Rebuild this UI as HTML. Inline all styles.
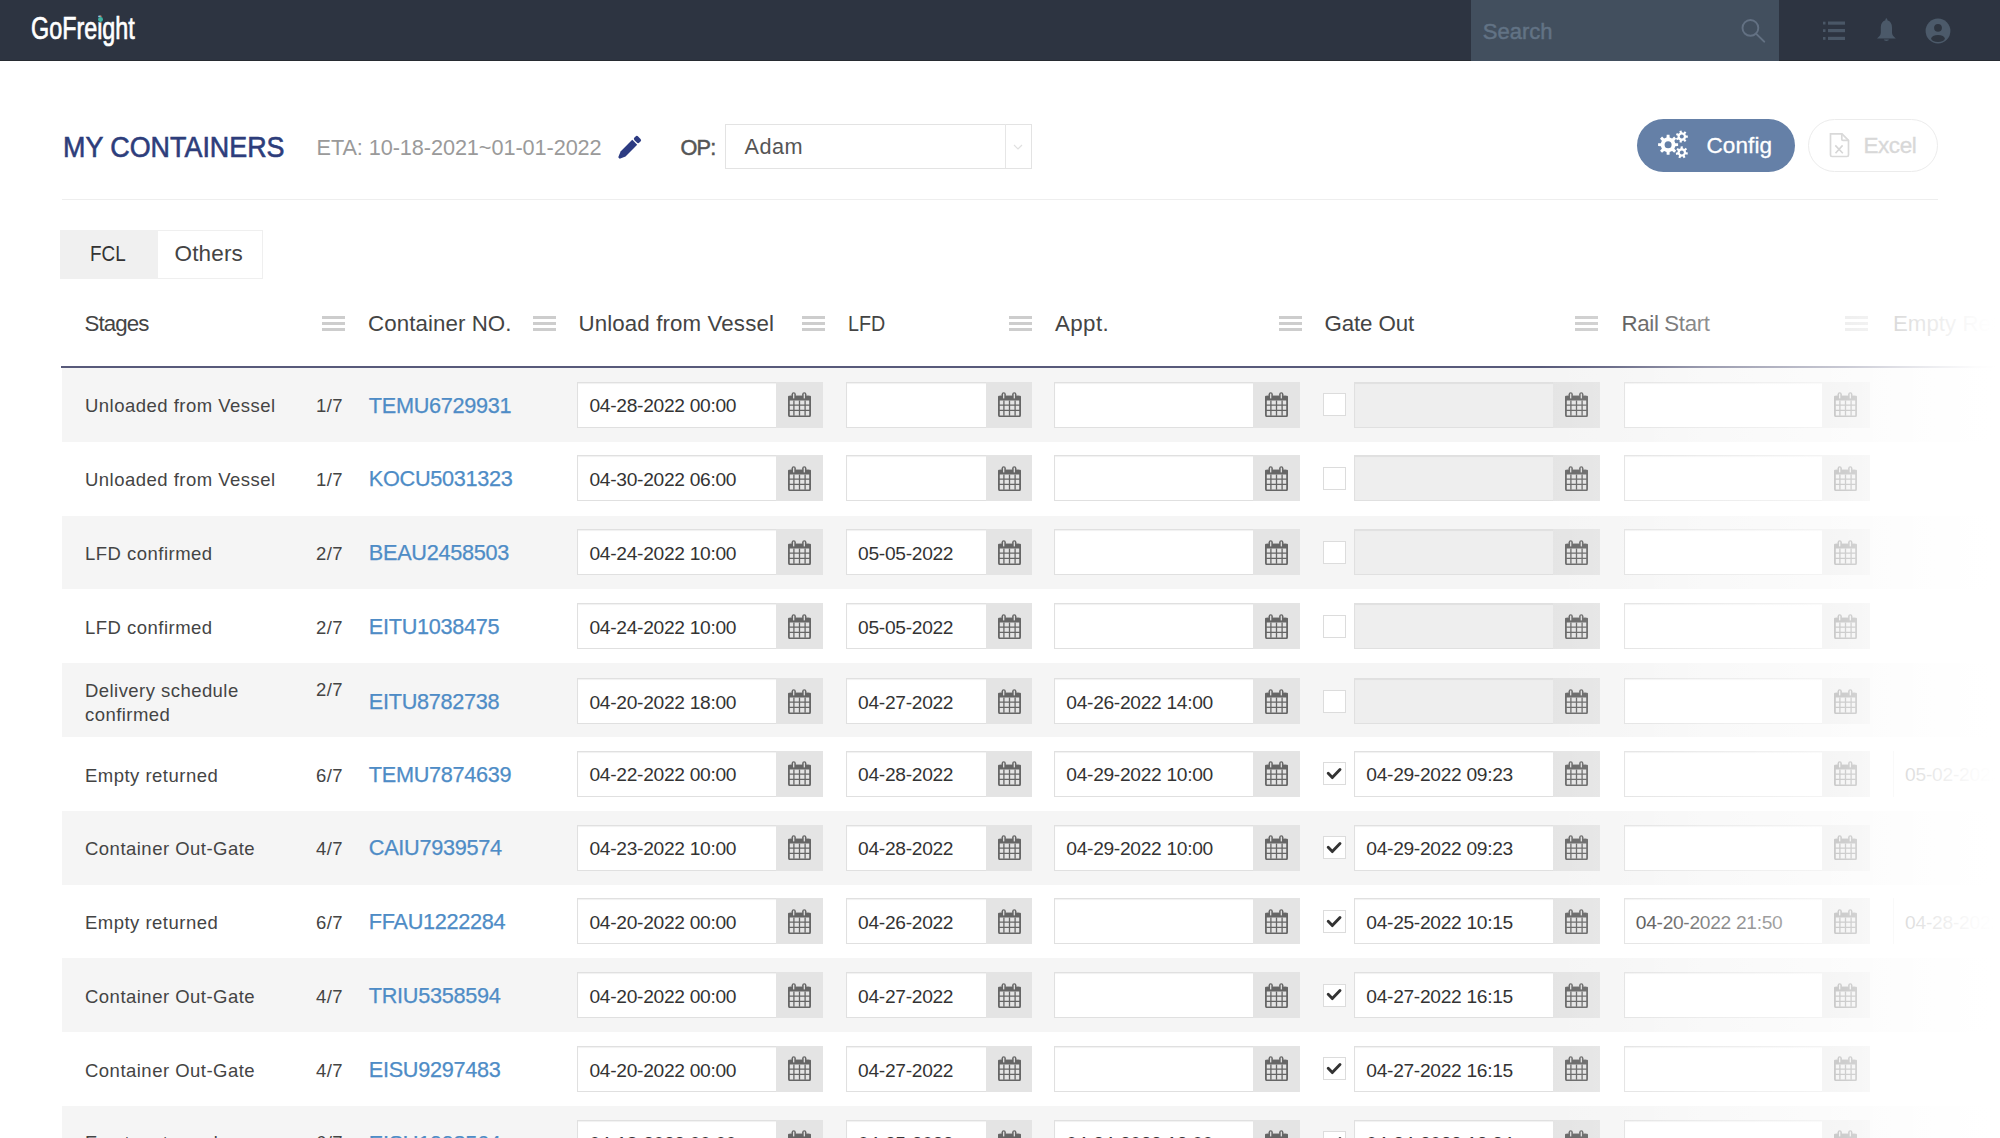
<!DOCTYPE html>
<html><head><meta charset="utf-8"><style>
html,body{margin:0;padding:0;}
body{width:2000px;height:1138px;overflow:hidden;position:relative;background:#fff;font-family:"Liberation Sans", sans-serif;}
.t{position:absolute;white-space:nowrap;}
.b{position:absolute;box-sizing:border-box;}
</style></head><body>
<div class="b" style="left:0.00px;top:0.00px;width:2000.00px;height:61.00px;background:#2d3441;"></div>
<div class="b" style="left:0.00px;top:60.00px;width:2000.00px;height:1.00px;background:#272b31;"></div>
<div class="b" style="left:1470.50px;top:0.00px;width:308.00px;height:61.00px;background:#424f5e;"></div>
<div class="t" style="left:31.20px;top:12.76px;font-size:31px;line-height:31px;color:#fff;font-weight:400;transform:scaleX(0.753);transform-origin:0 0;-webkit-text-stroke:0.7px #fff;">GoFreight</div>
<div class="b" style="left:97.80px;top:16.90px;width:4.80px;height:4.80px;background:#3fb3a3;border-radius:50%;box-shadow:0 0 0 0.6px #2d3441;"></div>
<div class="t" style="left:1482.80px;top:20.58px;font-size:22px;line-height:22px;color:#627385;font-weight:400;-webkit-text-stroke:0.45px #627385;">Search</div>
<svg width="40" height="40" viewBox="0 0 40 40" style="position:absolute;left:1730px;top:8px"><circle cx="20.4" cy="19.9" r="7.9" fill="none" stroke="#637183" stroke-width="1.9"/><path d="M26 25.6L34.2 33.6" stroke="#637183" stroke-width="2" stroke-linecap="round"/></svg>
<svg width="30" height="30" viewBox="0 0 30 30" style="position:absolute;left:1815px;top:15px"><g fill="#4a5767"><rect x="8" y="6.7" width="2.5" height="2.8"/><rect x="8" y="14.2" width="2.5" height="2.8"/><rect x="8" y="22" width="2.5" height="2.8"/><rect x="13" y="6.5" width="17" height="3.2"/><rect x="13" y="14" width="17" height="3.2"/><rect x="13" y="21.8" width="17" height="3.2"/></g></svg>
<svg width="30" height="30" viewBox="0 0 30 30" style="position:absolute;left:1871px;top:15px"><path fill="#4b5969" d="M15.4 3.3C16.2 3.3 16.4 4.5 16.4 5.3C19.6 6.2 21 9 21 12.5L21 17.5C21 20 22.5 21.5 24.8 23.5L6 23.5C8.3 21.5 9.8 20 9.8 17.5L9.8 12.5C9.8 9 11.2 6.2 14.4 5.3C14.4 4.5 14.6 3.3 15.4 3.3Z"/><path fill="#4b5969" d="M13 24.6H17.8C17.8 25.6 16.6 26 15.4 26C14.2 26 13 25.6 13 24.6Z"/></svg>
<svg width="30" height="30" viewBox="0 0 30 30" style="position:absolute;left:1923.3px;top:15.6px"><circle cx="15" cy="15" r="12.4" fill="#4c5a6a"/><circle cx="15" cy="11.8" r="3.9" fill="#2e3540"/><ellipse cx="15" cy="22.5" rx="6.8" ry="3.6" fill="#2e3540"/></svg>
<div class="t" style="left:63.20px;top:132.59px;font-size:28.6px;line-height:28.6px;color:#2d3d7b;font-weight:400;transform:scaleX(0.94);transform-origin:0 0;-webkit-text-stroke:0.6px #2d3d7b;">MY CONTAINERS</div>
<div class="t" style="left:316.50px;top:136.63px;font-size:21.7px;line-height:21.7px;color:#9a9a9a;font-weight:400;letter-spacing:-0.08px;">ETA: 10-18-2021~01-01-2022</div>
<svg width="40" height="40" viewBox="0 0 40 40" style="position:absolute;left:608.8px;top:127.6px"><g transform="rotate(45 20 20)" fill="#2c3b82"><rect x="16.5" y="5.4" width="7" height="5.2" rx="1.8"/><path d="M16.5 11.9H23.5V28.4L21 34.2H19L16.5 28.4Z"/></g></svg>
<div class="t" style="left:680.50px;top:136.63px;font-size:21.7px;line-height:21.7px;color:#555;font-weight:400;letter-spacing:-0.85px;-webkit-text-stroke:0.5px #555;">OP:</div>
<div class="b" style="left:725.00px;top:123.50px;width:307.00px;height:45.00px;border:1px solid #e3e3e3;background:#fff;"></div>
<div class="b" style="left:1005.00px;top:124.00px;width:1.00px;height:44.00px;background:#e6e6e6;"></div>
<div class="t" style="left:744.50px;top:135.63px;font-size:21.7px;line-height:21.7px;color:#555;font-weight:400;letter-spacing:0.47px;">Adam</div>
<svg width="14" height="10" viewBox="0 0 14 10" style="position:absolute;left:1011px;top:142px"><path d="M3 3L7 7L11 3" fill="none" stroke="#e0e0e0" stroke-width="1.2"/></svg>
<div class="b" style="left:1637.00px;top:118.50px;width:158.00px;height:53.00px;background:#6580a7;border-radius:27px;"></div>
<svg width="40" height="40" viewBox="0 0 40 40" style="position:absolute;left:1650px;top:125px"><path d="M16.54 12.47L16.68 9.70L19.52 9.70L19.66 12.47L22.11 13.48L24.16 11.62L26.18 13.64L24.32 15.69L25.33 18.14L28.10 18.28L28.10 21.12L25.33 21.26L24.32 23.71L26.18 25.76L24.16 27.78L22.11 25.92L19.66 26.93L19.52 29.70L16.68 29.70L16.54 26.93L14.09 25.92L12.04 27.78L10.02 25.76L11.88 23.71L10.87 21.26L8.10 21.12L8.10 18.28L10.87 18.14L11.88 15.69L10.02 13.64L12.04 11.62L14.09 13.48Z" fill="#fff"/><circle cx="18.1" cy="19.7" r="3.5" fill="#6580a7"/><path d="M35.96 10.51L37.81 10.54L37.81 12.66L35.96 12.69L35.24 14.17L36.38 15.63L34.71 16.96L33.54 15.53L31.94 15.90L31.50 17.69L29.43 17.22L29.81 15.41L28.52 14.39L26.85 15.16L25.93 13.25L27.58 12.42L27.58 10.78L25.93 9.95L26.85 8.04L28.52 8.81L29.81 7.79L29.43 5.98L31.50 5.51L31.94 7.30L33.54 7.67L34.71 6.24L36.38 7.57L35.24 9.03Z" fill="#fff"/><circle cx="31.8" cy="11.6" r="2.0" fill="#6580a7"/><path d="M36.09 27.16L37.90 27.55L37.48 29.63L35.66 29.29L34.66 30.61L35.48 32.26L33.59 33.23L32.73 31.60L31.08 31.64L30.29 33.31L28.36 32.44L29.10 30.74L28.04 29.48L26.24 29.91L25.72 27.85L27.50 27.37L27.83 25.75L26.37 24.62L27.66 22.92L29.14 24.02L30.61 23.27L30.59 21.42L32.72 21.37L32.79 23.21L34.29 23.89L35.72 22.73L37.09 24.36L35.69 25.56Z" fill="#fff"/><circle cx="31.8" cy="27.4" r="2.0" fill="#6580a7"/></svg>
<div class="t" style="left:1706.50px;top:134.55px;font-size:22.5px;line-height:22.5px;color:#fff;font-weight:400;letter-spacing:0.1px;-webkit-text-stroke:0.3px #fff;">Config</div>
<div class="b" style="left:1808.00px;top:118.50px;width:130.00px;height:53.00px;border:1.5px solid #ececec;border-radius:27px;background:#fff;"></div>
<svg width="24" height="28" viewBox="0 0 24 28" style="position:absolute;left:1827px;top:131px"><path d="M3.5 2.8H15L21.5 9.3V24C21.5 25 21 25.5 20 25.5H5C4 25.5 3.5 25 3.5 24Z" fill="none" stroke="#d9d9d9" stroke-width="1.7"/><path d="M14.8 2.8V8.2C14.8 9 15.2 9.4 16 9.4H21.5" fill="none" stroke="#d9d9d9" stroke-width="1.7"/><path d="M8.3 14.4L15.8 22.3M15.6 14.4L8.5 22.3" stroke="#d6d6d6" stroke-width="1.6"/></svg>
<div class="t" style="left:1863.50px;top:135.25px;font-size:22.5px;line-height:22.5px;color:#d8d8d8;font-weight:400;letter-spacing:-0.45px;-webkit-text-stroke:0.3px #d8d8d8;">Excel</div>
<div class="b" style="left:62.00px;top:198.50px;width:1876.00px;height:1.50px;background:#eeeeee;"></div>
<div class="b" style="left:60.00px;top:229.50px;width:203.00px;height:49.00px;border:1px solid #efefef;background:#fff;"></div>
<div class="b" style="left:60.00px;top:229.50px;width:98.00px;height:49.00px;background:#f0f0f0;"></div>
<div class="t" style="left:89.80px;top:242.55px;font-size:22.5px;line-height:22.5px;color:#333;font-weight:400;transform:scaleX(0.84);transform-origin:0 0;">FCL</div>
<div class="t" style="left:174.50px;top:242.55px;font-size:22.5px;line-height:22.5px;color:#444;font-weight:400;letter-spacing:0.15px;">Others</div>
<div class="t" style="left:84.50px;top:313.12px;font-size:22.3px;line-height:22.3px;color:#444;font-weight:400;letter-spacing:-0.91px;">Stages</div>
<div class="b" style="left:321.50px;top:315.50px;width:23.20px;height:3.00px;background:#cdcdcd;"></div><div class="b" style="left:321.50px;top:321.50px;width:23.20px;height:3.00px;background:#cdcdcd;"></div><div class="b" style="left:321.50px;top:327.50px;width:23.20px;height:3.00px;background:#cdcdcd;"></div>
<div class="t" style="left:368.00px;top:313.12px;font-size:22.3px;line-height:22.3px;color:#444;font-weight:400;letter-spacing:0.08px;">Container NO.</div>
<div class="b" style="left:532.50px;top:315.50px;width:23.20px;height:3.00px;background:#cdcdcd;"></div><div class="b" style="left:532.50px;top:321.50px;width:23.20px;height:3.00px;background:#cdcdcd;"></div><div class="b" style="left:532.50px;top:327.50px;width:23.20px;height:3.00px;background:#cdcdcd;"></div>
<div class="t" style="left:578.50px;top:313.12px;font-size:22.3px;line-height:22.3px;color:#444;font-weight:400;letter-spacing:0.12px;">Unload from Vessel</div>
<div class="b" style="left:801.50px;top:315.50px;width:23.20px;height:3.00px;background:#cdcdcd;"></div><div class="b" style="left:801.50px;top:321.50px;width:23.20px;height:3.00px;background:#cdcdcd;"></div><div class="b" style="left:801.50px;top:327.50px;width:23.20px;height:3.00px;background:#cdcdcd;"></div>
<div class="t" style="left:847.50px;top:313.12px;font-size:22.3px;line-height:22.3px;color:#444;font-weight:400;transform:scaleX(0.884);transform-origin:0 0;">LFD</div>
<div class="b" style="left:1009.30px;top:315.50px;width:23.20px;height:3.00px;background:#cdcdcd;"></div><div class="b" style="left:1009.30px;top:321.50px;width:23.20px;height:3.00px;background:#cdcdcd;"></div><div class="b" style="left:1009.30px;top:327.50px;width:23.20px;height:3.00px;background:#cdcdcd;"></div>
<div class="t" style="left:1055.00px;top:313.12px;font-size:22.3px;line-height:22.3px;color:#444;font-weight:400;letter-spacing:0.41px;">Appt.</div>
<div class="b" style="left:1278.50px;top:315.50px;width:23.20px;height:3.00px;background:#cdcdcd;"></div><div class="b" style="left:1278.50px;top:321.50px;width:23.20px;height:3.00px;background:#cdcdcd;"></div><div class="b" style="left:1278.50px;top:327.50px;width:23.20px;height:3.00px;background:#cdcdcd;"></div>
<div class="t" style="left:1324.50px;top:313.12px;font-size:22.3px;line-height:22.3px;color:#444;font-weight:400;letter-spacing:-0.11px;">Gate Out</div>
<div class="b" style="left:1575.30px;top:315.50px;width:23.20px;height:3.00px;background:#cdcdcd;"></div><div class="b" style="left:1575.30px;top:321.50px;width:23.20px;height:3.00px;background:#cdcdcd;"></div><div class="b" style="left:1575.30px;top:327.50px;width:23.20px;height:3.00px;background:#cdcdcd;"></div>
<div class="t" style="left:1621.50px;top:313.12px;font-size:22.3px;line-height:22.3px;color:#444;font-weight:400;letter-spacing:-0.36px;">Rail Start</div>
<div class="b" style="left:1845.30px;top:315.50px;width:23.20px;height:3.00px;background:#cdcdcd;"></div><div class="b" style="left:1845.30px;top:321.50px;width:23.20px;height:3.00px;background:#cdcdcd;"></div><div class="b" style="left:1845.30px;top:327.50px;width:23.20px;height:3.00px;background:#cdcdcd;"></div>
<div class="t" style="left:1893.00px;top:313.12px;font-size:22.3px;line-height:22.3px;color:#444;font-weight:400;">Empty Return</div>
<div class="b" style="left:61.00px;top:366.00px;width:1939.00px;height:2.00px;background:#585a7a;"></div>
<div class="b" style="left:61.50px;top:368.00px;width:1938.50px;height:73.80px;background:#f5f5f5;"></div>
<div class="t" style="left:85.00px;top:397.44px;font-size:18.5px;line-height:18.5px;color:#444;font-weight:400;letter-spacing:0.48px;">Unloaded from Vessel</div>
<div class="t" style="left:316.00px;top:397.44px;font-size:18.5px;line-height:18.5px;color:#444;font-weight:400;letter-spacing:0.39px;">1/7</div>
<div class="t" style="left:368.80px;top:394.53px;font-size:21.7px;line-height:21.7px;color:#4e8cc6;font-weight:400;letter-spacing:-0.3px;-webkit-text-stroke:0.25px #4e8cc6;">TEMU6729931</div>
<div class="b" style="left:577.20px;top:381.60px;width:245.80px;height:46.00px;border:1px solid #e0e0e0;box-shadow:inset 0 1px 1px rgba(0,0,0,.06);background:#fff;"></div><div class="b" style="left:775.80px;top:381.60px;width:47.20px;height:46.00px;background:#e4e4e4;"></div><svg width="23" height="25" viewBox="0 0 23 25" style="position:absolute;left:788.00px;top:392.10px"><g fill="none" stroke="#666"><rect x="0.9" y="4.6" width="21.2" height="19.9" rx="1.5" stroke-width="1.8"/><path d="M1 13.2H22M1 18.4H22M5.9 8.4V23.8M11.5 8.4V23.8M17.1 8.4V23.8" stroke-width="1.3"/></g><rect x="0" y="3.8" width="23" height="4.6" rx="1" fill="#666"/><rect x="3.6" y="0.2" width="4.2" height="7.4" rx="2.1" fill="#666"/><rect x="14.2" y="0.2" width="4.2" height="7.4" rx="2.1" fill="#666"/><rect x="5.1" y="1.6" width="1.2" height="4.8" fill="#fff" opacity=".85"/><rect x="15.7" y="1.6" width="1.2" height="4.8" fill="#fff" opacity=".85"/></svg><div class="t" style="left:589.50px;top:396.15px;font-size:19.2px;line-height:19.2px;color:#333;font-weight:400;letter-spacing:-0.3px;">04-28-2022 00:00</div>
<div class="b" style="left:845.80px;top:381.60px;width:186.00px;height:46.00px;border:1px solid #e0e0e0;box-shadow:inset 0 1px 1px rgba(0,0,0,.06);background:#fff;"></div><div class="b" style="left:985.80px;top:381.60px;width:46.00px;height:46.00px;background:#e4e4e4;"></div><svg width="23" height="25" viewBox="0 0 23 25" style="position:absolute;left:998.00px;top:392.10px"><g fill="none" stroke="#666"><rect x="0.9" y="4.6" width="21.2" height="19.9" rx="1.5" stroke-width="1.8"/><path d="M1 13.2H22M1 18.4H22M5.9 8.4V23.8M11.5 8.4V23.8M17.1 8.4V23.8" stroke-width="1.3"/></g><rect x="0" y="3.8" width="23" height="4.6" rx="1" fill="#666"/><rect x="3.6" y="0.2" width="4.2" height="7.4" rx="2.1" fill="#666"/><rect x="14.2" y="0.2" width="4.2" height="7.4" rx="2.1" fill="#666"/><rect x="5.1" y="1.6" width="1.2" height="4.8" fill="#fff" opacity=".85"/><rect x="15.7" y="1.6" width="1.2" height="4.8" fill="#fff" opacity=".85"/></svg>
<div class="b" style="left:1054.00px;top:381.60px;width:246.00px;height:46.00px;border:1px solid #e0e0e0;box-shadow:inset 0 1px 1px rgba(0,0,0,.06);background:#fff;"></div><div class="b" style="left:1252.50px;top:381.60px;width:47.50px;height:46.00px;background:#e4e4e4;"></div><svg width="23" height="25" viewBox="0 0 23 25" style="position:absolute;left:1264.70px;top:392.10px"><g fill="none" stroke="#666"><rect x="0.9" y="4.6" width="21.2" height="19.9" rx="1.5" stroke-width="1.8"/><path d="M1 13.2H22M1 18.4H22M5.9 8.4V23.8M11.5 8.4V23.8M17.1 8.4V23.8" stroke-width="1.3"/></g><rect x="0" y="3.8" width="23" height="4.6" rx="1" fill="#666"/><rect x="3.6" y="0.2" width="4.2" height="7.4" rx="2.1" fill="#666"/><rect x="14.2" y="0.2" width="4.2" height="7.4" rx="2.1" fill="#666"/><rect x="5.1" y="1.6" width="1.2" height="4.8" fill="#fff" opacity=".85"/><rect x="15.7" y="1.6" width="1.2" height="4.8" fill="#fff" opacity=".85"/></svg>
<div class="b" style="left:1323.20px;top:393.10px;width:22.60px;height:23.00px;border:1.5px solid #dcdcdc;background:#fff;"></div>
<div class="b" style="left:1354.00px;top:381.60px;width:246.00px;height:46.00px;border:1px solid #e0e0e0;box-shadow:inset 0 1px 1px rgba(0,0,0,.06);background:#eeeeee;"></div><div class="b" style="left:1552.50px;top:381.60px;width:47.50px;height:46.00px;background:#e4e4e4;"></div><svg width="23" height="25" viewBox="0 0 23 25" style="position:absolute;left:1564.70px;top:392.10px"><g fill="none" stroke="#666"><rect x="0.9" y="4.6" width="21.2" height="19.9" rx="1.5" stroke-width="1.8"/><path d="M1 13.2H22M1 18.4H22M5.9 8.4V23.8M11.5 8.4V23.8M17.1 8.4V23.8" stroke-width="1.3"/></g><rect x="0" y="3.8" width="23" height="4.6" rx="1" fill="#666"/><rect x="3.6" y="0.2" width="4.2" height="7.4" rx="2.1" fill="#666"/><rect x="14.2" y="0.2" width="4.2" height="7.4" rx="2.1" fill="#666"/><rect x="5.1" y="1.6" width="1.2" height="4.8" fill="#fff" opacity=".85"/><rect x="15.7" y="1.6" width="1.2" height="4.8" fill="#fff" opacity=".85"/></svg>
<div class="b" style="left:1623.50px;top:381.60px;width:246.50px;height:46.00px;border:1px solid #e0e0e0;box-shadow:inset 0 1px 1px rgba(0,0,0,.06);background:#fff;"></div><div class="b" style="left:1821.50px;top:381.60px;width:48.50px;height:46.00px;background:#e4e4e4;"></div><svg width="23" height="25" viewBox="0 0 23 25" style="position:absolute;left:1833.70px;top:392.10px"><g fill="none" stroke="#666"><rect x="0.9" y="4.6" width="21.2" height="19.9" rx="1.5" stroke-width="1.8"/><path d="M1 13.2H22M1 18.4H22M5.9 8.4V23.8M11.5 8.4V23.8M17.1 8.4V23.8" stroke-width="1.3"/></g><rect x="0" y="3.8" width="23" height="4.6" rx="1" fill="#666"/><rect x="3.6" y="0.2" width="4.2" height="7.4" rx="2.1" fill="#666"/><rect x="14.2" y="0.2" width="4.2" height="7.4" rx="2.1" fill="#666"/><rect x="5.1" y="1.6" width="1.2" height="4.8" fill="#fff" opacity=".85"/><rect x="15.7" y="1.6" width="1.2" height="4.8" fill="#fff" opacity=".85"/></svg>

<div class="t" style="left:85.00px;top:471.26px;font-size:18.5px;line-height:18.5px;color:#444;font-weight:400;letter-spacing:0.48px;">Unloaded from Vessel</div>
<div class="t" style="left:316.00px;top:471.26px;font-size:18.5px;line-height:18.5px;color:#444;font-weight:400;letter-spacing:0.39px;">1/7</div>
<div class="t" style="left:368.80px;top:468.35px;font-size:21.7px;line-height:21.7px;color:#4e8cc6;font-weight:400;letter-spacing:-0.3px;-webkit-text-stroke:0.25px #4e8cc6;">KOCU5031323</div>
<div class="b" style="left:577.20px;top:455.42px;width:245.80px;height:46.00px;border:1px solid #e0e0e0;box-shadow:inset 0 1px 1px rgba(0,0,0,.06);background:#fff;"></div><div class="b" style="left:775.80px;top:455.42px;width:47.20px;height:46.00px;background:#e4e4e4;"></div><svg width="23" height="25" viewBox="0 0 23 25" style="position:absolute;left:788.00px;top:465.92px"><g fill="none" stroke="#666"><rect x="0.9" y="4.6" width="21.2" height="19.9" rx="1.5" stroke-width="1.8"/><path d="M1 13.2H22M1 18.4H22M5.9 8.4V23.8M11.5 8.4V23.8M17.1 8.4V23.8" stroke-width="1.3"/></g><rect x="0" y="3.8" width="23" height="4.6" rx="1" fill="#666"/><rect x="3.6" y="0.2" width="4.2" height="7.4" rx="2.1" fill="#666"/><rect x="14.2" y="0.2" width="4.2" height="7.4" rx="2.1" fill="#666"/><rect x="5.1" y="1.6" width="1.2" height="4.8" fill="#fff" opacity=".85"/><rect x="15.7" y="1.6" width="1.2" height="4.8" fill="#fff" opacity=".85"/></svg><div class="t" style="left:589.50px;top:469.97px;font-size:19.2px;line-height:19.2px;color:#333;font-weight:400;letter-spacing:-0.3px;">04-30-2022 06:00</div>
<div class="b" style="left:845.80px;top:455.42px;width:186.00px;height:46.00px;border:1px solid #e0e0e0;box-shadow:inset 0 1px 1px rgba(0,0,0,.06);background:#fff;"></div><div class="b" style="left:985.80px;top:455.42px;width:46.00px;height:46.00px;background:#e4e4e4;"></div><svg width="23" height="25" viewBox="0 0 23 25" style="position:absolute;left:998.00px;top:465.92px"><g fill="none" stroke="#666"><rect x="0.9" y="4.6" width="21.2" height="19.9" rx="1.5" stroke-width="1.8"/><path d="M1 13.2H22M1 18.4H22M5.9 8.4V23.8M11.5 8.4V23.8M17.1 8.4V23.8" stroke-width="1.3"/></g><rect x="0" y="3.8" width="23" height="4.6" rx="1" fill="#666"/><rect x="3.6" y="0.2" width="4.2" height="7.4" rx="2.1" fill="#666"/><rect x="14.2" y="0.2" width="4.2" height="7.4" rx="2.1" fill="#666"/><rect x="5.1" y="1.6" width="1.2" height="4.8" fill="#fff" opacity=".85"/><rect x="15.7" y="1.6" width="1.2" height="4.8" fill="#fff" opacity=".85"/></svg>
<div class="b" style="left:1054.00px;top:455.42px;width:246.00px;height:46.00px;border:1px solid #e0e0e0;box-shadow:inset 0 1px 1px rgba(0,0,0,.06);background:#fff;"></div><div class="b" style="left:1252.50px;top:455.42px;width:47.50px;height:46.00px;background:#e4e4e4;"></div><svg width="23" height="25" viewBox="0 0 23 25" style="position:absolute;left:1264.70px;top:465.92px"><g fill="none" stroke="#666"><rect x="0.9" y="4.6" width="21.2" height="19.9" rx="1.5" stroke-width="1.8"/><path d="M1 13.2H22M1 18.4H22M5.9 8.4V23.8M11.5 8.4V23.8M17.1 8.4V23.8" stroke-width="1.3"/></g><rect x="0" y="3.8" width="23" height="4.6" rx="1" fill="#666"/><rect x="3.6" y="0.2" width="4.2" height="7.4" rx="2.1" fill="#666"/><rect x="14.2" y="0.2" width="4.2" height="7.4" rx="2.1" fill="#666"/><rect x="5.1" y="1.6" width="1.2" height="4.8" fill="#fff" opacity=".85"/><rect x="15.7" y="1.6" width="1.2" height="4.8" fill="#fff" opacity=".85"/></svg>
<div class="b" style="left:1323.20px;top:466.92px;width:22.60px;height:23.00px;border:1.5px solid #dcdcdc;background:#fff;"></div>
<div class="b" style="left:1354.00px;top:455.42px;width:246.00px;height:46.00px;border:1px solid #e0e0e0;box-shadow:inset 0 1px 1px rgba(0,0,0,.06);background:#eeeeee;"></div><div class="b" style="left:1552.50px;top:455.42px;width:47.50px;height:46.00px;background:#e4e4e4;"></div><svg width="23" height="25" viewBox="0 0 23 25" style="position:absolute;left:1564.70px;top:465.92px"><g fill="none" stroke="#666"><rect x="0.9" y="4.6" width="21.2" height="19.9" rx="1.5" stroke-width="1.8"/><path d="M1 13.2H22M1 18.4H22M5.9 8.4V23.8M11.5 8.4V23.8M17.1 8.4V23.8" stroke-width="1.3"/></g><rect x="0" y="3.8" width="23" height="4.6" rx="1" fill="#666"/><rect x="3.6" y="0.2" width="4.2" height="7.4" rx="2.1" fill="#666"/><rect x="14.2" y="0.2" width="4.2" height="7.4" rx="2.1" fill="#666"/><rect x="5.1" y="1.6" width="1.2" height="4.8" fill="#fff" opacity=".85"/><rect x="15.7" y="1.6" width="1.2" height="4.8" fill="#fff" opacity=".85"/></svg>
<div class="b" style="left:1623.50px;top:455.42px;width:246.50px;height:46.00px;border:1px solid #e0e0e0;box-shadow:inset 0 1px 1px rgba(0,0,0,.06);background:#fff;"></div><div class="b" style="left:1821.50px;top:455.42px;width:48.50px;height:46.00px;background:#e4e4e4;"></div><svg width="23" height="25" viewBox="0 0 23 25" style="position:absolute;left:1833.70px;top:465.92px"><g fill="none" stroke="#666"><rect x="0.9" y="4.6" width="21.2" height="19.9" rx="1.5" stroke-width="1.8"/><path d="M1 13.2H22M1 18.4H22M5.9 8.4V23.8M11.5 8.4V23.8M17.1 8.4V23.8" stroke-width="1.3"/></g><rect x="0" y="3.8" width="23" height="4.6" rx="1" fill="#666"/><rect x="3.6" y="0.2" width="4.2" height="7.4" rx="2.1" fill="#666"/><rect x="14.2" y="0.2" width="4.2" height="7.4" rx="2.1" fill="#666"/><rect x="5.1" y="1.6" width="1.2" height="4.8" fill="#fff" opacity=".85"/><rect x="15.7" y="1.6" width="1.2" height="4.8" fill="#fff" opacity=".85"/></svg>

<div class="b" style="left:61.50px;top:515.60px;width:1938.50px;height:73.80px;background:#f5f5f5;"></div>
<div class="t" style="left:85.00px;top:545.08px;font-size:18.5px;line-height:18.5px;color:#444;font-weight:400;letter-spacing:0.48px;">LFD confirmed</div>
<div class="t" style="left:316.00px;top:545.08px;font-size:18.5px;line-height:18.5px;color:#444;font-weight:400;letter-spacing:0.39px;">2/7</div>
<div class="t" style="left:368.80px;top:542.17px;font-size:21.7px;line-height:21.7px;color:#4e8cc6;font-weight:400;letter-spacing:-0.3px;-webkit-text-stroke:0.25px #4e8cc6;">BEAU2458503</div>
<div class="b" style="left:577.20px;top:529.24px;width:245.80px;height:46.00px;border:1px solid #e0e0e0;box-shadow:inset 0 1px 1px rgba(0,0,0,.06);background:#fff;"></div><div class="b" style="left:775.80px;top:529.24px;width:47.20px;height:46.00px;background:#e4e4e4;"></div><svg width="23" height="25" viewBox="0 0 23 25" style="position:absolute;left:788.00px;top:539.74px"><g fill="none" stroke="#666"><rect x="0.9" y="4.6" width="21.2" height="19.9" rx="1.5" stroke-width="1.8"/><path d="M1 13.2H22M1 18.4H22M5.9 8.4V23.8M11.5 8.4V23.8M17.1 8.4V23.8" stroke-width="1.3"/></g><rect x="0" y="3.8" width="23" height="4.6" rx="1" fill="#666"/><rect x="3.6" y="0.2" width="4.2" height="7.4" rx="2.1" fill="#666"/><rect x="14.2" y="0.2" width="4.2" height="7.4" rx="2.1" fill="#666"/><rect x="5.1" y="1.6" width="1.2" height="4.8" fill="#fff" opacity=".85"/><rect x="15.7" y="1.6" width="1.2" height="4.8" fill="#fff" opacity=".85"/></svg><div class="t" style="left:589.50px;top:543.79px;font-size:19.2px;line-height:19.2px;color:#333;font-weight:400;letter-spacing:-0.3px;">04-24-2022 10:00</div>
<div class="b" style="left:845.80px;top:529.24px;width:186.00px;height:46.00px;border:1px solid #e0e0e0;box-shadow:inset 0 1px 1px rgba(0,0,0,.06);background:#fff;"></div><div class="b" style="left:985.80px;top:529.24px;width:46.00px;height:46.00px;background:#e4e4e4;"></div><svg width="23" height="25" viewBox="0 0 23 25" style="position:absolute;left:998.00px;top:539.74px"><g fill="none" stroke="#666"><rect x="0.9" y="4.6" width="21.2" height="19.9" rx="1.5" stroke-width="1.8"/><path d="M1 13.2H22M1 18.4H22M5.9 8.4V23.8M11.5 8.4V23.8M17.1 8.4V23.8" stroke-width="1.3"/></g><rect x="0" y="3.8" width="23" height="4.6" rx="1" fill="#666"/><rect x="3.6" y="0.2" width="4.2" height="7.4" rx="2.1" fill="#666"/><rect x="14.2" y="0.2" width="4.2" height="7.4" rx="2.1" fill="#666"/><rect x="5.1" y="1.6" width="1.2" height="4.8" fill="#fff" opacity=".85"/><rect x="15.7" y="1.6" width="1.2" height="4.8" fill="#fff" opacity=".85"/></svg><div class="t" style="left:858.10px;top:543.79px;font-size:19.2px;line-height:19.2px;color:#333;font-weight:400;letter-spacing:-0.3px;">05-05-2022</div>
<div class="b" style="left:1054.00px;top:529.24px;width:246.00px;height:46.00px;border:1px solid #e0e0e0;box-shadow:inset 0 1px 1px rgba(0,0,0,.06);background:#fff;"></div><div class="b" style="left:1252.50px;top:529.24px;width:47.50px;height:46.00px;background:#e4e4e4;"></div><svg width="23" height="25" viewBox="0 0 23 25" style="position:absolute;left:1264.70px;top:539.74px"><g fill="none" stroke="#666"><rect x="0.9" y="4.6" width="21.2" height="19.9" rx="1.5" stroke-width="1.8"/><path d="M1 13.2H22M1 18.4H22M5.9 8.4V23.8M11.5 8.4V23.8M17.1 8.4V23.8" stroke-width="1.3"/></g><rect x="0" y="3.8" width="23" height="4.6" rx="1" fill="#666"/><rect x="3.6" y="0.2" width="4.2" height="7.4" rx="2.1" fill="#666"/><rect x="14.2" y="0.2" width="4.2" height="7.4" rx="2.1" fill="#666"/><rect x="5.1" y="1.6" width="1.2" height="4.8" fill="#fff" opacity=".85"/><rect x="15.7" y="1.6" width="1.2" height="4.8" fill="#fff" opacity=".85"/></svg>
<div class="b" style="left:1323.20px;top:540.74px;width:22.60px;height:23.00px;border:1.5px solid #dcdcdc;background:#fff;"></div>
<div class="b" style="left:1354.00px;top:529.24px;width:246.00px;height:46.00px;border:1px solid #e0e0e0;box-shadow:inset 0 1px 1px rgba(0,0,0,.06);background:#eeeeee;"></div><div class="b" style="left:1552.50px;top:529.24px;width:47.50px;height:46.00px;background:#e4e4e4;"></div><svg width="23" height="25" viewBox="0 0 23 25" style="position:absolute;left:1564.70px;top:539.74px"><g fill="none" stroke="#666"><rect x="0.9" y="4.6" width="21.2" height="19.9" rx="1.5" stroke-width="1.8"/><path d="M1 13.2H22M1 18.4H22M5.9 8.4V23.8M11.5 8.4V23.8M17.1 8.4V23.8" stroke-width="1.3"/></g><rect x="0" y="3.8" width="23" height="4.6" rx="1" fill="#666"/><rect x="3.6" y="0.2" width="4.2" height="7.4" rx="2.1" fill="#666"/><rect x="14.2" y="0.2" width="4.2" height="7.4" rx="2.1" fill="#666"/><rect x="5.1" y="1.6" width="1.2" height="4.8" fill="#fff" opacity=".85"/><rect x="15.7" y="1.6" width="1.2" height="4.8" fill="#fff" opacity=".85"/></svg>
<div class="b" style="left:1623.50px;top:529.24px;width:246.50px;height:46.00px;border:1px solid #e0e0e0;box-shadow:inset 0 1px 1px rgba(0,0,0,.06);background:#fff;"></div><div class="b" style="left:1821.50px;top:529.24px;width:48.50px;height:46.00px;background:#e4e4e4;"></div><svg width="23" height="25" viewBox="0 0 23 25" style="position:absolute;left:1833.70px;top:539.74px"><g fill="none" stroke="#666"><rect x="0.9" y="4.6" width="21.2" height="19.9" rx="1.5" stroke-width="1.8"/><path d="M1 13.2H22M1 18.4H22M5.9 8.4V23.8M11.5 8.4V23.8M17.1 8.4V23.8" stroke-width="1.3"/></g><rect x="0" y="3.8" width="23" height="4.6" rx="1" fill="#666"/><rect x="3.6" y="0.2" width="4.2" height="7.4" rx="2.1" fill="#666"/><rect x="14.2" y="0.2" width="4.2" height="7.4" rx="2.1" fill="#666"/><rect x="5.1" y="1.6" width="1.2" height="4.8" fill="#fff" opacity=".85"/><rect x="15.7" y="1.6" width="1.2" height="4.8" fill="#fff" opacity=".85"/></svg>

<div class="t" style="left:85.00px;top:618.90px;font-size:18.5px;line-height:18.5px;color:#444;font-weight:400;letter-spacing:0.48px;">LFD confirmed</div>
<div class="t" style="left:316.00px;top:618.90px;font-size:18.5px;line-height:18.5px;color:#444;font-weight:400;letter-spacing:0.39px;">2/7</div>
<div class="t" style="left:368.80px;top:615.99px;font-size:21.7px;line-height:21.7px;color:#4e8cc6;font-weight:400;letter-spacing:-0.3px;-webkit-text-stroke:0.25px #4e8cc6;">EITU1038475</div>
<div class="b" style="left:577.20px;top:603.06px;width:245.80px;height:46.00px;border:1px solid #e0e0e0;box-shadow:inset 0 1px 1px rgba(0,0,0,.06);background:#fff;"></div><div class="b" style="left:775.80px;top:603.06px;width:47.20px;height:46.00px;background:#e4e4e4;"></div><svg width="23" height="25" viewBox="0 0 23 25" style="position:absolute;left:788.00px;top:613.56px"><g fill="none" stroke="#666"><rect x="0.9" y="4.6" width="21.2" height="19.9" rx="1.5" stroke-width="1.8"/><path d="M1 13.2H22M1 18.4H22M5.9 8.4V23.8M11.5 8.4V23.8M17.1 8.4V23.8" stroke-width="1.3"/></g><rect x="0" y="3.8" width="23" height="4.6" rx="1" fill="#666"/><rect x="3.6" y="0.2" width="4.2" height="7.4" rx="2.1" fill="#666"/><rect x="14.2" y="0.2" width="4.2" height="7.4" rx="2.1" fill="#666"/><rect x="5.1" y="1.6" width="1.2" height="4.8" fill="#fff" opacity=".85"/><rect x="15.7" y="1.6" width="1.2" height="4.8" fill="#fff" opacity=".85"/></svg><div class="t" style="left:589.50px;top:617.61px;font-size:19.2px;line-height:19.2px;color:#333;font-weight:400;letter-spacing:-0.3px;">04-24-2022 10:00</div>
<div class="b" style="left:845.80px;top:603.06px;width:186.00px;height:46.00px;border:1px solid #e0e0e0;box-shadow:inset 0 1px 1px rgba(0,0,0,.06);background:#fff;"></div><div class="b" style="left:985.80px;top:603.06px;width:46.00px;height:46.00px;background:#e4e4e4;"></div><svg width="23" height="25" viewBox="0 0 23 25" style="position:absolute;left:998.00px;top:613.56px"><g fill="none" stroke="#666"><rect x="0.9" y="4.6" width="21.2" height="19.9" rx="1.5" stroke-width="1.8"/><path d="M1 13.2H22M1 18.4H22M5.9 8.4V23.8M11.5 8.4V23.8M17.1 8.4V23.8" stroke-width="1.3"/></g><rect x="0" y="3.8" width="23" height="4.6" rx="1" fill="#666"/><rect x="3.6" y="0.2" width="4.2" height="7.4" rx="2.1" fill="#666"/><rect x="14.2" y="0.2" width="4.2" height="7.4" rx="2.1" fill="#666"/><rect x="5.1" y="1.6" width="1.2" height="4.8" fill="#fff" opacity=".85"/><rect x="15.7" y="1.6" width="1.2" height="4.8" fill="#fff" opacity=".85"/></svg><div class="t" style="left:858.10px;top:617.61px;font-size:19.2px;line-height:19.2px;color:#333;font-weight:400;letter-spacing:-0.3px;">05-05-2022</div>
<div class="b" style="left:1054.00px;top:603.06px;width:246.00px;height:46.00px;border:1px solid #e0e0e0;box-shadow:inset 0 1px 1px rgba(0,0,0,.06);background:#fff;"></div><div class="b" style="left:1252.50px;top:603.06px;width:47.50px;height:46.00px;background:#e4e4e4;"></div><svg width="23" height="25" viewBox="0 0 23 25" style="position:absolute;left:1264.70px;top:613.56px"><g fill="none" stroke="#666"><rect x="0.9" y="4.6" width="21.2" height="19.9" rx="1.5" stroke-width="1.8"/><path d="M1 13.2H22M1 18.4H22M5.9 8.4V23.8M11.5 8.4V23.8M17.1 8.4V23.8" stroke-width="1.3"/></g><rect x="0" y="3.8" width="23" height="4.6" rx="1" fill="#666"/><rect x="3.6" y="0.2" width="4.2" height="7.4" rx="2.1" fill="#666"/><rect x="14.2" y="0.2" width="4.2" height="7.4" rx="2.1" fill="#666"/><rect x="5.1" y="1.6" width="1.2" height="4.8" fill="#fff" opacity=".85"/><rect x="15.7" y="1.6" width="1.2" height="4.8" fill="#fff" opacity=".85"/></svg>
<div class="b" style="left:1323.20px;top:614.56px;width:22.60px;height:23.00px;border:1.5px solid #dcdcdc;background:#fff;"></div>
<div class="b" style="left:1354.00px;top:603.06px;width:246.00px;height:46.00px;border:1px solid #e0e0e0;box-shadow:inset 0 1px 1px rgba(0,0,0,.06);background:#eeeeee;"></div><div class="b" style="left:1552.50px;top:603.06px;width:47.50px;height:46.00px;background:#e4e4e4;"></div><svg width="23" height="25" viewBox="0 0 23 25" style="position:absolute;left:1564.70px;top:613.56px"><g fill="none" stroke="#666"><rect x="0.9" y="4.6" width="21.2" height="19.9" rx="1.5" stroke-width="1.8"/><path d="M1 13.2H22M1 18.4H22M5.9 8.4V23.8M11.5 8.4V23.8M17.1 8.4V23.8" stroke-width="1.3"/></g><rect x="0" y="3.8" width="23" height="4.6" rx="1" fill="#666"/><rect x="3.6" y="0.2" width="4.2" height="7.4" rx="2.1" fill="#666"/><rect x="14.2" y="0.2" width="4.2" height="7.4" rx="2.1" fill="#666"/><rect x="5.1" y="1.6" width="1.2" height="4.8" fill="#fff" opacity=".85"/><rect x="15.7" y="1.6" width="1.2" height="4.8" fill="#fff" opacity=".85"/></svg>
<div class="b" style="left:1623.50px;top:603.06px;width:246.50px;height:46.00px;border:1px solid #e0e0e0;box-shadow:inset 0 1px 1px rgba(0,0,0,.06);background:#fff;"></div><div class="b" style="left:1821.50px;top:603.06px;width:48.50px;height:46.00px;background:#e4e4e4;"></div><svg width="23" height="25" viewBox="0 0 23 25" style="position:absolute;left:1833.70px;top:613.56px"><g fill="none" stroke="#666"><rect x="0.9" y="4.6" width="21.2" height="19.9" rx="1.5" stroke-width="1.8"/><path d="M1 13.2H22M1 18.4H22M5.9 8.4V23.8M11.5 8.4V23.8M17.1 8.4V23.8" stroke-width="1.3"/></g><rect x="0" y="3.8" width="23" height="4.6" rx="1" fill="#666"/><rect x="3.6" y="0.2" width="4.2" height="7.4" rx="2.1" fill="#666"/><rect x="14.2" y="0.2" width="4.2" height="7.4" rx="2.1" fill="#666"/><rect x="5.1" y="1.6" width="1.2" height="4.8" fill="#fff" opacity=".85"/><rect x="15.7" y="1.6" width="1.2" height="4.8" fill="#fff" opacity=".85"/></svg>

<div class="b" style="left:61.50px;top:663.20px;width:1938.50px;height:73.80px;background:#f5f5f5;"></div>
<div class="t" style="left:85px;top:679.08px;font-size:18.5px;line-height:24px;color:#444;letter-spacing:0.45px;">Delivery schedule<br>confirmed</div>
<div class="t" style="left:316.00px;top:681.42px;font-size:18.5px;line-height:18.5px;color:#444;font-weight:400;letter-spacing:0.39px;">2/7</div>
<div class="t" style="left:368.80px;top:691.31px;font-size:21.7px;line-height:21.7px;color:#4e8cc6;font-weight:400;letter-spacing:-0.3px;-webkit-text-stroke:0.25px #4e8cc6;">EITU8782738</div>
<div class="b" style="left:577.20px;top:678.38px;width:245.80px;height:46.00px;border:1px solid #e0e0e0;box-shadow:inset 0 1px 1px rgba(0,0,0,.06);background:#fff;"></div><div class="b" style="left:775.80px;top:678.38px;width:47.20px;height:46.00px;background:#e4e4e4;"></div><svg width="23" height="25" viewBox="0 0 23 25" style="position:absolute;left:788.00px;top:688.88px"><g fill="none" stroke="#666"><rect x="0.9" y="4.6" width="21.2" height="19.9" rx="1.5" stroke-width="1.8"/><path d="M1 13.2H22M1 18.4H22M5.9 8.4V23.8M11.5 8.4V23.8M17.1 8.4V23.8" stroke-width="1.3"/></g><rect x="0" y="3.8" width="23" height="4.6" rx="1" fill="#666"/><rect x="3.6" y="0.2" width="4.2" height="7.4" rx="2.1" fill="#666"/><rect x="14.2" y="0.2" width="4.2" height="7.4" rx="2.1" fill="#666"/><rect x="5.1" y="1.6" width="1.2" height="4.8" fill="#fff" opacity=".85"/><rect x="15.7" y="1.6" width="1.2" height="4.8" fill="#fff" opacity=".85"/></svg><div class="t" style="left:589.50px;top:692.93px;font-size:19.2px;line-height:19.2px;color:#333;font-weight:400;letter-spacing:-0.3px;">04-20-2022 18:00</div>
<div class="b" style="left:845.80px;top:678.38px;width:186.00px;height:46.00px;border:1px solid #e0e0e0;box-shadow:inset 0 1px 1px rgba(0,0,0,.06);background:#fff;"></div><div class="b" style="left:985.80px;top:678.38px;width:46.00px;height:46.00px;background:#e4e4e4;"></div><svg width="23" height="25" viewBox="0 0 23 25" style="position:absolute;left:998.00px;top:688.88px"><g fill="none" stroke="#666"><rect x="0.9" y="4.6" width="21.2" height="19.9" rx="1.5" stroke-width="1.8"/><path d="M1 13.2H22M1 18.4H22M5.9 8.4V23.8M11.5 8.4V23.8M17.1 8.4V23.8" stroke-width="1.3"/></g><rect x="0" y="3.8" width="23" height="4.6" rx="1" fill="#666"/><rect x="3.6" y="0.2" width="4.2" height="7.4" rx="2.1" fill="#666"/><rect x="14.2" y="0.2" width="4.2" height="7.4" rx="2.1" fill="#666"/><rect x="5.1" y="1.6" width="1.2" height="4.8" fill="#fff" opacity=".85"/><rect x="15.7" y="1.6" width="1.2" height="4.8" fill="#fff" opacity=".85"/></svg><div class="t" style="left:858.10px;top:692.93px;font-size:19.2px;line-height:19.2px;color:#333;font-weight:400;letter-spacing:-0.3px;">04-27-2022</div>
<div class="b" style="left:1054.00px;top:678.38px;width:246.00px;height:46.00px;border:1px solid #e0e0e0;box-shadow:inset 0 1px 1px rgba(0,0,0,.06);background:#fff;"></div><div class="b" style="left:1252.50px;top:678.38px;width:47.50px;height:46.00px;background:#e4e4e4;"></div><svg width="23" height="25" viewBox="0 0 23 25" style="position:absolute;left:1264.70px;top:688.88px"><g fill="none" stroke="#666"><rect x="0.9" y="4.6" width="21.2" height="19.9" rx="1.5" stroke-width="1.8"/><path d="M1 13.2H22M1 18.4H22M5.9 8.4V23.8M11.5 8.4V23.8M17.1 8.4V23.8" stroke-width="1.3"/></g><rect x="0" y="3.8" width="23" height="4.6" rx="1" fill="#666"/><rect x="3.6" y="0.2" width="4.2" height="7.4" rx="2.1" fill="#666"/><rect x="14.2" y="0.2" width="4.2" height="7.4" rx="2.1" fill="#666"/><rect x="5.1" y="1.6" width="1.2" height="4.8" fill="#fff" opacity=".85"/><rect x="15.7" y="1.6" width="1.2" height="4.8" fill="#fff" opacity=".85"/></svg><div class="t" style="left:1066.30px;top:692.93px;font-size:19.2px;line-height:19.2px;color:#333;font-weight:400;letter-spacing:-0.3px;">04-26-2022 14:00</div>
<div class="b" style="left:1323.20px;top:689.88px;width:22.60px;height:23.00px;border:1.5px solid #dcdcdc;background:#fff;"></div>
<div class="b" style="left:1354.00px;top:678.38px;width:246.00px;height:46.00px;border:1px solid #e0e0e0;box-shadow:inset 0 1px 1px rgba(0,0,0,.06);background:#eeeeee;"></div><div class="b" style="left:1552.50px;top:678.38px;width:47.50px;height:46.00px;background:#e4e4e4;"></div><svg width="23" height="25" viewBox="0 0 23 25" style="position:absolute;left:1564.70px;top:688.88px"><g fill="none" stroke="#666"><rect x="0.9" y="4.6" width="21.2" height="19.9" rx="1.5" stroke-width="1.8"/><path d="M1 13.2H22M1 18.4H22M5.9 8.4V23.8M11.5 8.4V23.8M17.1 8.4V23.8" stroke-width="1.3"/></g><rect x="0" y="3.8" width="23" height="4.6" rx="1" fill="#666"/><rect x="3.6" y="0.2" width="4.2" height="7.4" rx="2.1" fill="#666"/><rect x="14.2" y="0.2" width="4.2" height="7.4" rx="2.1" fill="#666"/><rect x="5.1" y="1.6" width="1.2" height="4.8" fill="#fff" opacity=".85"/><rect x="15.7" y="1.6" width="1.2" height="4.8" fill="#fff" opacity=".85"/></svg>
<div class="b" style="left:1623.50px;top:678.38px;width:246.50px;height:46.00px;border:1px solid #e0e0e0;box-shadow:inset 0 1px 1px rgba(0,0,0,.06);background:#fff;"></div><div class="b" style="left:1821.50px;top:678.38px;width:48.50px;height:46.00px;background:#e4e4e4;"></div><svg width="23" height="25" viewBox="0 0 23 25" style="position:absolute;left:1833.70px;top:688.88px"><g fill="none" stroke="#666"><rect x="0.9" y="4.6" width="21.2" height="19.9" rx="1.5" stroke-width="1.8"/><path d="M1 13.2H22M1 18.4H22M5.9 8.4V23.8M11.5 8.4V23.8M17.1 8.4V23.8" stroke-width="1.3"/></g><rect x="0" y="3.8" width="23" height="4.6" rx="1" fill="#666"/><rect x="3.6" y="0.2" width="4.2" height="7.4" rx="2.1" fill="#666"/><rect x="14.2" y="0.2" width="4.2" height="7.4" rx="2.1" fill="#666"/><rect x="5.1" y="1.6" width="1.2" height="4.8" fill="#fff" opacity=".85"/><rect x="15.7" y="1.6" width="1.2" height="4.8" fill="#fff" opacity=".85"/></svg>

<div class="t" style="left:85.00px;top:766.54px;font-size:18.5px;line-height:18.5px;color:#444;font-weight:400;letter-spacing:0.48px;">Empty returned</div>
<div class="t" style="left:316.00px;top:766.54px;font-size:18.5px;line-height:18.5px;color:#444;font-weight:400;letter-spacing:0.39px;">6/7</div>
<div class="t" style="left:368.80px;top:763.63px;font-size:21.7px;line-height:21.7px;color:#4e8cc6;font-weight:400;letter-spacing:-0.3px;-webkit-text-stroke:0.25px #4e8cc6;">TEMU7874639</div>
<div class="b" style="left:577.20px;top:750.70px;width:245.80px;height:46.00px;border:1px solid #e0e0e0;box-shadow:inset 0 1px 1px rgba(0,0,0,.06);background:#fff;"></div><div class="b" style="left:775.80px;top:750.70px;width:47.20px;height:46.00px;background:#e4e4e4;"></div><svg width="23" height="25" viewBox="0 0 23 25" style="position:absolute;left:788.00px;top:761.20px"><g fill="none" stroke="#666"><rect x="0.9" y="4.6" width="21.2" height="19.9" rx="1.5" stroke-width="1.8"/><path d="M1 13.2H22M1 18.4H22M5.9 8.4V23.8M11.5 8.4V23.8M17.1 8.4V23.8" stroke-width="1.3"/></g><rect x="0" y="3.8" width="23" height="4.6" rx="1" fill="#666"/><rect x="3.6" y="0.2" width="4.2" height="7.4" rx="2.1" fill="#666"/><rect x="14.2" y="0.2" width="4.2" height="7.4" rx="2.1" fill="#666"/><rect x="5.1" y="1.6" width="1.2" height="4.8" fill="#fff" opacity=".85"/><rect x="15.7" y="1.6" width="1.2" height="4.8" fill="#fff" opacity=".85"/></svg><div class="t" style="left:589.50px;top:765.25px;font-size:19.2px;line-height:19.2px;color:#333;font-weight:400;letter-spacing:-0.3px;">04-22-2022 00:00</div>
<div class="b" style="left:845.80px;top:750.70px;width:186.00px;height:46.00px;border:1px solid #e0e0e0;box-shadow:inset 0 1px 1px rgba(0,0,0,.06);background:#fff;"></div><div class="b" style="left:985.80px;top:750.70px;width:46.00px;height:46.00px;background:#e4e4e4;"></div><svg width="23" height="25" viewBox="0 0 23 25" style="position:absolute;left:998.00px;top:761.20px"><g fill="none" stroke="#666"><rect x="0.9" y="4.6" width="21.2" height="19.9" rx="1.5" stroke-width="1.8"/><path d="M1 13.2H22M1 18.4H22M5.9 8.4V23.8M11.5 8.4V23.8M17.1 8.4V23.8" stroke-width="1.3"/></g><rect x="0" y="3.8" width="23" height="4.6" rx="1" fill="#666"/><rect x="3.6" y="0.2" width="4.2" height="7.4" rx="2.1" fill="#666"/><rect x="14.2" y="0.2" width="4.2" height="7.4" rx="2.1" fill="#666"/><rect x="5.1" y="1.6" width="1.2" height="4.8" fill="#fff" opacity=".85"/><rect x="15.7" y="1.6" width="1.2" height="4.8" fill="#fff" opacity=".85"/></svg><div class="t" style="left:858.10px;top:765.25px;font-size:19.2px;line-height:19.2px;color:#333;font-weight:400;letter-spacing:-0.3px;">04-28-2022</div>
<div class="b" style="left:1054.00px;top:750.70px;width:246.00px;height:46.00px;border:1px solid #e0e0e0;box-shadow:inset 0 1px 1px rgba(0,0,0,.06);background:#fff;"></div><div class="b" style="left:1252.50px;top:750.70px;width:47.50px;height:46.00px;background:#e4e4e4;"></div><svg width="23" height="25" viewBox="0 0 23 25" style="position:absolute;left:1264.70px;top:761.20px"><g fill="none" stroke="#666"><rect x="0.9" y="4.6" width="21.2" height="19.9" rx="1.5" stroke-width="1.8"/><path d="M1 13.2H22M1 18.4H22M5.9 8.4V23.8M11.5 8.4V23.8M17.1 8.4V23.8" stroke-width="1.3"/></g><rect x="0" y="3.8" width="23" height="4.6" rx="1" fill="#666"/><rect x="3.6" y="0.2" width="4.2" height="7.4" rx="2.1" fill="#666"/><rect x="14.2" y="0.2" width="4.2" height="7.4" rx="2.1" fill="#666"/><rect x="5.1" y="1.6" width="1.2" height="4.8" fill="#fff" opacity=".85"/><rect x="15.7" y="1.6" width="1.2" height="4.8" fill="#fff" opacity=".85"/></svg><div class="t" style="left:1066.30px;top:765.25px;font-size:19.2px;line-height:19.2px;color:#333;font-weight:400;letter-spacing:-0.3px;">04-29-2022 10:00</div>
<div class="b" style="left:1323.20px;top:762.20px;width:22.60px;height:23.00px;border:1.5px solid #dcdcdc;background:#fff;"></div>
<svg width="22" height="22" viewBox="0 0 22 22" style="position:absolute;left:1323px;top:761.90px"><path d="M5.2 11.3L9.3 15.6L17 7.6" fill="none" stroke="#333" stroke-width="2.9" stroke-linecap="round" stroke-linejoin="round"/></svg>
<div class="b" style="left:1354.00px;top:750.70px;width:246.00px;height:46.00px;border:1px solid #e0e0e0;box-shadow:inset 0 1px 1px rgba(0,0,0,.06);background:#fff;"></div><div class="b" style="left:1552.50px;top:750.70px;width:47.50px;height:46.00px;background:#e4e4e4;"></div><svg width="23" height="25" viewBox="0 0 23 25" style="position:absolute;left:1564.70px;top:761.20px"><g fill="none" stroke="#666"><rect x="0.9" y="4.6" width="21.2" height="19.9" rx="1.5" stroke-width="1.8"/><path d="M1 13.2H22M1 18.4H22M5.9 8.4V23.8M11.5 8.4V23.8M17.1 8.4V23.8" stroke-width="1.3"/></g><rect x="0" y="3.8" width="23" height="4.6" rx="1" fill="#666"/><rect x="3.6" y="0.2" width="4.2" height="7.4" rx="2.1" fill="#666"/><rect x="14.2" y="0.2" width="4.2" height="7.4" rx="2.1" fill="#666"/><rect x="5.1" y="1.6" width="1.2" height="4.8" fill="#fff" opacity=".85"/><rect x="15.7" y="1.6" width="1.2" height="4.8" fill="#fff" opacity=".85"/></svg><div class="t" style="left:1366.30px;top:765.25px;font-size:19.2px;line-height:19.2px;color:#333;font-weight:400;letter-spacing:-0.3px;">04-29-2022 09:23</div>
<div class="b" style="left:1623.50px;top:750.70px;width:246.50px;height:46.00px;border:1px solid #e0e0e0;box-shadow:inset 0 1px 1px rgba(0,0,0,.06);background:#fff;"></div><div class="b" style="left:1821.50px;top:750.70px;width:48.50px;height:46.00px;background:#e4e4e4;"></div><svg width="23" height="25" viewBox="0 0 23 25" style="position:absolute;left:1833.70px;top:761.20px"><g fill="none" stroke="#666"><rect x="0.9" y="4.6" width="21.2" height="19.9" rx="1.5" stroke-width="1.8"/><path d="M1 13.2H22M1 18.4H22M5.9 8.4V23.8M11.5 8.4V23.8M17.1 8.4V23.8" stroke-width="1.3"/></g><rect x="0" y="3.8" width="23" height="4.6" rx="1" fill="#666"/><rect x="3.6" y="0.2" width="4.2" height="7.4" rx="2.1" fill="#666"/><rect x="14.2" y="0.2" width="4.2" height="7.4" rx="2.1" fill="#666"/><rect x="5.1" y="1.6" width="1.2" height="4.8" fill="#fff" opacity=".85"/><rect x="15.7" y="1.6" width="1.2" height="4.8" fill="#fff" opacity=".85"/></svg>
<div class="b" style="left:1893.00px;top:750.70px;width:250.00px;height:46.00px;border-left:1px solid #e2e2e2;background:#fff;"></div>
<div class="t" style="left:1905.00px;top:765.25px;font-size:19.2px;line-height:19.2px;color:#333;font-weight:400;letter-spacing:-0.23px;">05-02-2022</div>
<div class="b" style="left:61.50px;top:810.80px;width:1938.50px;height:73.80px;background:#f5f5f5;"></div>
<div class="t" style="left:85.00px;top:840.36px;font-size:18.5px;line-height:18.5px;color:#444;font-weight:400;letter-spacing:0.48px;">Container Out-Gate</div>
<div class="t" style="left:316.00px;top:840.36px;font-size:18.5px;line-height:18.5px;color:#444;font-weight:400;letter-spacing:0.39px;">4/7</div>
<div class="t" style="left:368.80px;top:837.45px;font-size:21.7px;line-height:21.7px;color:#4e8cc6;font-weight:400;letter-spacing:-0.3px;-webkit-text-stroke:0.25px #4e8cc6;">CAIU7939574</div>
<div class="b" style="left:577.20px;top:824.52px;width:245.80px;height:46.00px;border:1px solid #e0e0e0;box-shadow:inset 0 1px 1px rgba(0,0,0,.06);background:#fff;"></div><div class="b" style="left:775.80px;top:824.52px;width:47.20px;height:46.00px;background:#e4e4e4;"></div><svg width="23" height="25" viewBox="0 0 23 25" style="position:absolute;left:788.00px;top:835.02px"><g fill="none" stroke="#666"><rect x="0.9" y="4.6" width="21.2" height="19.9" rx="1.5" stroke-width="1.8"/><path d="M1 13.2H22M1 18.4H22M5.9 8.4V23.8M11.5 8.4V23.8M17.1 8.4V23.8" stroke-width="1.3"/></g><rect x="0" y="3.8" width="23" height="4.6" rx="1" fill="#666"/><rect x="3.6" y="0.2" width="4.2" height="7.4" rx="2.1" fill="#666"/><rect x="14.2" y="0.2" width="4.2" height="7.4" rx="2.1" fill="#666"/><rect x="5.1" y="1.6" width="1.2" height="4.8" fill="#fff" opacity=".85"/><rect x="15.7" y="1.6" width="1.2" height="4.8" fill="#fff" opacity=".85"/></svg><div class="t" style="left:589.50px;top:839.07px;font-size:19.2px;line-height:19.2px;color:#333;font-weight:400;letter-spacing:-0.3px;">04-23-2022 10:00</div>
<div class="b" style="left:845.80px;top:824.52px;width:186.00px;height:46.00px;border:1px solid #e0e0e0;box-shadow:inset 0 1px 1px rgba(0,0,0,.06);background:#fff;"></div><div class="b" style="left:985.80px;top:824.52px;width:46.00px;height:46.00px;background:#e4e4e4;"></div><svg width="23" height="25" viewBox="0 0 23 25" style="position:absolute;left:998.00px;top:835.02px"><g fill="none" stroke="#666"><rect x="0.9" y="4.6" width="21.2" height="19.9" rx="1.5" stroke-width="1.8"/><path d="M1 13.2H22M1 18.4H22M5.9 8.4V23.8M11.5 8.4V23.8M17.1 8.4V23.8" stroke-width="1.3"/></g><rect x="0" y="3.8" width="23" height="4.6" rx="1" fill="#666"/><rect x="3.6" y="0.2" width="4.2" height="7.4" rx="2.1" fill="#666"/><rect x="14.2" y="0.2" width="4.2" height="7.4" rx="2.1" fill="#666"/><rect x="5.1" y="1.6" width="1.2" height="4.8" fill="#fff" opacity=".85"/><rect x="15.7" y="1.6" width="1.2" height="4.8" fill="#fff" opacity=".85"/></svg><div class="t" style="left:858.10px;top:839.07px;font-size:19.2px;line-height:19.2px;color:#333;font-weight:400;letter-spacing:-0.3px;">04-28-2022</div>
<div class="b" style="left:1054.00px;top:824.52px;width:246.00px;height:46.00px;border:1px solid #e0e0e0;box-shadow:inset 0 1px 1px rgba(0,0,0,.06);background:#fff;"></div><div class="b" style="left:1252.50px;top:824.52px;width:47.50px;height:46.00px;background:#e4e4e4;"></div><svg width="23" height="25" viewBox="0 0 23 25" style="position:absolute;left:1264.70px;top:835.02px"><g fill="none" stroke="#666"><rect x="0.9" y="4.6" width="21.2" height="19.9" rx="1.5" stroke-width="1.8"/><path d="M1 13.2H22M1 18.4H22M5.9 8.4V23.8M11.5 8.4V23.8M17.1 8.4V23.8" stroke-width="1.3"/></g><rect x="0" y="3.8" width="23" height="4.6" rx="1" fill="#666"/><rect x="3.6" y="0.2" width="4.2" height="7.4" rx="2.1" fill="#666"/><rect x="14.2" y="0.2" width="4.2" height="7.4" rx="2.1" fill="#666"/><rect x="5.1" y="1.6" width="1.2" height="4.8" fill="#fff" opacity=".85"/><rect x="15.7" y="1.6" width="1.2" height="4.8" fill="#fff" opacity=".85"/></svg><div class="t" style="left:1066.30px;top:839.07px;font-size:19.2px;line-height:19.2px;color:#333;font-weight:400;letter-spacing:-0.3px;">04-29-2022 10:00</div>
<div class="b" style="left:1323.20px;top:836.02px;width:22.60px;height:23.00px;border:1.5px solid #dcdcdc;background:#fff;"></div>
<svg width="22" height="22" viewBox="0 0 22 22" style="position:absolute;left:1323px;top:835.72px"><path d="M5.2 11.3L9.3 15.6L17 7.6" fill="none" stroke="#333" stroke-width="2.9" stroke-linecap="round" stroke-linejoin="round"/></svg>
<div class="b" style="left:1354.00px;top:824.52px;width:246.00px;height:46.00px;border:1px solid #e0e0e0;box-shadow:inset 0 1px 1px rgba(0,0,0,.06);background:#fff;"></div><div class="b" style="left:1552.50px;top:824.52px;width:47.50px;height:46.00px;background:#e4e4e4;"></div><svg width="23" height="25" viewBox="0 0 23 25" style="position:absolute;left:1564.70px;top:835.02px"><g fill="none" stroke="#666"><rect x="0.9" y="4.6" width="21.2" height="19.9" rx="1.5" stroke-width="1.8"/><path d="M1 13.2H22M1 18.4H22M5.9 8.4V23.8M11.5 8.4V23.8M17.1 8.4V23.8" stroke-width="1.3"/></g><rect x="0" y="3.8" width="23" height="4.6" rx="1" fill="#666"/><rect x="3.6" y="0.2" width="4.2" height="7.4" rx="2.1" fill="#666"/><rect x="14.2" y="0.2" width="4.2" height="7.4" rx="2.1" fill="#666"/><rect x="5.1" y="1.6" width="1.2" height="4.8" fill="#fff" opacity=".85"/><rect x="15.7" y="1.6" width="1.2" height="4.8" fill="#fff" opacity=".85"/></svg><div class="t" style="left:1366.30px;top:839.07px;font-size:19.2px;line-height:19.2px;color:#333;font-weight:400;letter-spacing:-0.3px;">04-29-2022 09:23</div>
<div class="b" style="left:1623.50px;top:824.52px;width:246.50px;height:46.00px;border:1px solid #e0e0e0;box-shadow:inset 0 1px 1px rgba(0,0,0,.06);background:#fff;"></div><div class="b" style="left:1821.50px;top:824.52px;width:48.50px;height:46.00px;background:#e4e4e4;"></div><svg width="23" height="25" viewBox="0 0 23 25" style="position:absolute;left:1833.70px;top:835.02px"><g fill="none" stroke="#666"><rect x="0.9" y="4.6" width="21.2" height="19.9" rx="1.5" stroke-width="1.8"/><path d="M1 13.2H22M1 18.4H22M5.9 8.4V23.8M11.5 8.4V23.8M17.1 8.4V23.8" stroke-width="1.3"/></g><rect x="0" y="3.8" width="23" height="4.6" rx="1" fill="#666"/><rect x="3.6" y="0.2" width="4.2" height="7.4" rx="2.1" fill="#666"/><rect x="14.2" y="0.2" width="4.2" height="7.4" rx="2.1" fill="#666"/><rect x="5.1" y="1.6" width="1.2" height="4.8" fill="#fff" opacity=".85"/><rect x="15.7" y="1.6" width="1.2" height="4.8" fill="#fff" opacity=".85"/></svg>

<div class="t" style="left:85.00px;top:914.18px;font-size:18.5px;line-height:18.5px;color:#444;font-weight:400;letter-spacing:0.48px;">Empty returned</div>
<div class="t" style="left:316.00px;top:914.18px;font-size:18.5px;line-height:18.5px;color:#444;font-weight:400;letter-spacing:0.39px;">6/7</div>
<div class="t" style="left:368.80px;top:911.27px;font-size:21.7px;line-height:21.7px;color:#4e8cc6;font-weight:400;letter-spacing:-0.3px;-webkit-text-stroke:0.25px #4e8cc6;">FFAU1222284</div>
<div class="b" style="left:577.20px;top:898.34px;width:245.80px;height:46.00px;border:1px solid #e0e0e0;box-shadow:inset 0 1px 1px rgba(0,0,0,.06);background:#fff;"></div><div class="b" style="left:775.80px;top:898.34px;width:47.20px;height:46.00px;background:#e4e4e4;"></div><svg width="23" height="25" viewBox="0 0 23 25" style="position:absolute;left:788.00px;top:908.84px"><g fill="none" stroke="#666"><rect x="0.9" y="4.6" width="21.2" height="19.9" rx="1.5" stroke-width="1.8"/><path d="M1 13.2H22M1 18.4H22M5.9 8.4V23.8M11.5 8.4V23.8M17.1 8.4V23.8" stroke-width="1.3"/></g><rect x="0" y="3.8" width="23" height="4.6" rx="1" fill="#666"/><rect x="3.6" y="0.2" width="4.2" height="7.4" rx="2.1" fill="#666"/><rect x="14.2" y="0.2" width="4.2" height="7.4" rx="2.1" fill="#666"/><rect x="5.1" y="1.6" width="1.2" height="4.8" fill="#fff" opacity=".85"/><rect x="15.7" y="1.6" width="1.2" height="4.8" fill="#fff" opacity=".85"/></svg><div class="t" style="left:589.50px;top:912.89px;font-size:19.2px;line-height:19.2px;color:#333;font-weight:400;letter-spacing:-0.3px;">04-20-2022 00:00</div>
<div class="b" style="left:845.80px;top:898.34px;width:186.00px;height:46.00px;border:1px solid #e0e0e0;box-shadow:inset 0 1px 1px rgba(0,0,0,.06);background:#fff;"></div><div class="b" style="left:985.80px;top:898.34px;width:46.00px;height:46.00px;background:#e4e4e4;"></div><svg width="23" height="25" viewBox="0 0 23 25" style="position:absolute;left:998.00px;top:908.84px"><g fill="none" stroke="#666"><rect x="0.9" y="4.6" width="21.2" height="19.9" rx="1.5" stroke-width="1.8"/><path d="M1 13.2H22M1 18.4H22M5.9 8.4V23.8M11.5 8.4V23.8M17.1 8.4V23.8" stroke-width="1.3"/></g><rect x="0" y="3.8" width="23" height="4.6" rx="1" fill="#666"/><rect x="3.6" y="0.2" width="4.2" height="7.4" rx="2.1" fill="#666"/><rect x="14.2" y="0.2" width="4.2" height="7.4" rx="2.1" fill="#666"/><rect x="5.1" y="1.6" width="1.2" height="4.8" fill="#fff" opacity=".85"/><rect x="15.7" y="1.6" width="1.2" height="4.8" fill="#fff" opacity=".85"/></svg><div class="t" style="left:858.10px;top:912.89px;font-size:19.2px;line-height:19.2px;color:#333;font-weight:400;letter-spacing:-0.3px;">04-26-2022</div>
<div class="b" style="left:1054.00px;top:898.34px;width:246.00px;height:46.00px;border:1px solid #e0e0e0;box-shadow:inset 0 1px 1px rgba(0,0,0,.06);background:#fff;"></div><div class="b" style="left:1252.50px;top:898.34px;width:47.50px;height:46.00px;background:#e4e4e4;"></div><svg width="23" height="25" viewBox="0 0 23 25" style="position:absolute;left:1264.70px;top:908.84px"><g fill="none" stroke="#666"><rect x="0.9" y="4.6" width="21.2" height="19.9" rx="1.5" stroke-width="1.8"/><path d="M1 13.2H22M1 18.4H22M5.9 8.4V23.8M11.5 8.4V23.8M17.1 8.4V23.8" stroke-width="1.3"/></g><rect x="0" y="3.8" width="23" height="4.6" rx="1" fill="#666"/><rect x="3.6" y="0.2" width="4.2" height="7.4" rx="2.1" fill="#666"/><rect x="14.2" y="0.2" width="4.2" height="7.4" rx="2.1" fill="#666"/><rect x="5.1" y="1.6" width="1.2" height="4.8" fill="#fff" opacity=".85"/><rect x="15.7" y="1.6" width="1.2" height="4.8" fill="#fff" opacity=".85"/></svg>
<div class="b" style="left:1323.20px;top:909.84px;width:22.60px;height:23.00px;border:1.5px solid #dcdcdc;background:#fff;"></div>
<svg width="22" height="22" viewBox="0 0 22 22" style="position:absolute;left:1323px;top:909.54px"><path d="M5.2 11.3L9.3 15.6L17 7.6" fill="none" stroke="#333" stroke-width="2.9" stroke-linecap="round" stroke-linejoin="round"/></svg>
<div class="b" style="left:1354.00px;top:898.34px;width:246.00px;height:46.00px;border:1px solid #e0e0e0;box-shadow:inset 0 1px 1px rgba(0,0,0,.06);background:#fff;"></div><div class="b" style="left:1552.50px;top:898.34px;width:47.50px;height:46.00px;background:#e4e4e4;"></div><svg width="23" height="25" viewBox="0 0 23 25" style="position:absolute;left:1564.70px;top:908.84px"><g fill="none" stroke="#666"><rect x="0.9" y="4.6" width="21.2" height="19.9" rx="1.5" stroke-width="1.8"/><path d="M1 13.2H22M1 18.4H22M5.9 8.4V23.8M11.5 8.4V23.8M17.1 8.4V23.8" stroke-width="1.3"/></g><rect x="0" y="3.8" width="23" height="4.6" rx="1" fill="#666"/><rect x="3.6" y="0.2" width="4.2" height="7.4" rx="2.1" fill="#666"/><rect x="14.2" y="0.2" width="4.2" height="7.4" rx="2.1" fill="#666"/><rect x="5.1" y="1.6" width="1.2" height="4.8" fill="#fff" opacity=".85"/><rect x="15.7" y="1.6" width="1.2" height="4.8" fill="#fff" opacity=".85"/></svg><div class="t" style="left:1366.30px;top:912.89px;font-size:19.2px;line-height:19.2px;color:#333;font-weight:400;letter-spacing:-0.3px;">04-25-2022 10:15</div>
<div class="b" style="left:1623.50px;top:898.34px;width:246.50px;height:46.00px;border:1px solid #e0e0e0;box-shadow:inset 0 1px 1px rgba(0,0,0,.06);background:#fff;"></div><div class="b" style="left:1821.50px;top:898.34px;width:48.50px;height:46.00px;background:#e4e4e4;"></div><svg width="23" height="25" viewBox="0 0 23 25" style="position:absolute;left:1833.70px;top:908.84px"><g fill="none" stroke="#666"><rect x="0.9" y="4.6" width="21.2" height="19.9" rx="1.5" stroke-width="1.8"/><path d="M1 13.2H22M1 18.4H22M5.9 8.4V23.8M11.5 8.4V23.8M17.1 8.4V23.8" stroke-width="1.3"/></g><rect x="0" y="3.8" width="23" height="4.6" rx="1" fill="#666"/><rect x="3.6" y="0.2" width="4.2" height="7.4" rx="2.1" fill="#666"/><rect x="14.2" y="0.2" width="4.2" height="7.4" rx="2.1" fill="#666"/><rect x="5.1" y="1.6" width="1.2" height="4.8" fill="#fff" opacity=".85"/><rect x="15.7" y="1.6" width="1.2" height="4.8" fill="#fff" opacity=".85"/></svg><div class="t" style="left:1635.80px;top:912.89px;font-size:19.2px;line-height:19.2px;color:#333;font-weight:400;letter-spacing:-0.3px;">04-20-2022 21:50</div>
<div class="b" style="left:1893.00px;top:898.34px;width:250.00px;height:46.00px;border-left:1px solid #e2e2e2;background:#fff;"></div>
<div class="t" style="left:1905.00px;top:912.89px;font-size:19.2px;line-height:19.2px;color:#333;font-weight:400;letter-spacing:-0.23px;">04-28-2022</div>
<div class="b" style="left:61.50px;top:958.40px;width:1938.50px;height:73.80px;background:#f5f5f5;"></div>
<div class="t" style="left:85.00px;top:988.00px;font-size:18.5px;line-height:18.5px;color:#444;font-weight:400;letter-spacing:0.48px;">Container Out-Gate</div>
<div class="t" style="left:316.00px;top:988.00px;font-size:18.5px;line-height:18.5px;color:#444;font-weight:400;letter-spacing:0.39px;">4/7</div>
<div class="t" style="left:368.80px;top:985.09px;font-size:21.7px;line-height:21.7px;color:#4e8cc6;font-weight:400;letter-spacing:-0.3px;-webkit-text-stroke:0.25px #4e8cc6;">TRIU5358594</div>
<div class="b" style="left:577.20px;top:972.16px;width:245.80px;height:46.00px;border:1px solid #e0e0e0;box-shadow:inset 0 1px 1px rgba(0,0,0,.06);background:#fff;"></div><div class="b" style="left:775.80px;top:972.16px;width:47.20px;height:46.00px;background:#e4e4e4;"></div><svg width="23" height="25" viewBox="0 0 23 25" style="position:absolute;left:788.00px;top:982.66px"><g fill="none" stroke="#666"><rect x="0.9" y="4.6" width="21.2" height="19.9" rx="1.5" stroke-width="1.8"/><path d="M1 13.2H22M1 18.4H22M5.9 8.4V23.8M11.5 8.4V23.8M17.1 8.4V23.8" stroke-width="1.3"/></g><rect x="0" y="3.8" width="23" height="4.6" rx="1" fill="#666"/><rect x="3.6" y="0.2" width="4.2" height="7.4" rx="2.1" fill="#666"/><rect x="14.2" y="0.2" width="4.2" height="7.4" rx="2.1" fill="#666"/><rect x="5.1" y="1.6" width="1.2" height="4.8" fill="#fff" opacity=".85"/><rect x="15.7" y="1.6" width="1.2" height="4.8" fill="#fff" opacity=".85"/></svg><div class="t" style="left:589.50px;top:986.71px;font-size:19.2px;line-height:19.2px;color:#333;font-weight:400;letter-spacing:-0.3px;">04-20-2022 00:00</div>
<div class="b" style="left:845.80px;top:972.16px;width:186.00px;height:46.00px;border:1px solid #e0e0e0;box-shadow:inset 0 1px 1px rgba(0,0,0,.06);background:#fff;"></div><div class="b" style="left:985.80px;top:972.16px;width:46.00px;height:46.00px;background:#e4e4e4;"></div><svg width="23" height="25" viewBox="0 0 23 25" style="position:absolute;left:998.00px;top:982.66px"><g fill="none" stroke="#666"><rect x="0.9" y="4.6" width="21.2" height="19.9" rx="1.5" stroke-width="1.8"/><path d="M1 13.2H22M1 18.4H22M5.9 8.4V23.8M11.5 8.4V23.8M17.1 8.4V23.8" stroke-width="1.3"/></g><rect x="0" y="3.8" width="23" height="4.6" rx="1" fill="#666"/><rect x="3.6" y="0.2" width="4.2" height="7.4" rx="2.1" fill="#666"/><rect x="14.2" y="0.2" width="4.2" height="7.4" rx="2.1" fill="#666"/><rect x="5.1" y="1.6" width="1.2" height="4.8" fill="#fff" opacity=".85"/><rect x="15.7" y="1.6" width="1.2" height="4.8" fill="#fff" opacity=".85"/></svg><div class="t" style="left:858.10px;top:986.71px;font-size:19.2px;line-height:19.2px;color:#333;font-weight:400;letter-spacing:-0.3px;">04-27-2022</div>
<div class="b" style="left:1054.00px;top:972.16px;width:246.00px;height:46.00px;border:1px solid #e0e0e0;box-shadow:inset 0 1px 1px rgba(0,0,0,.06);background:#fff;"></div><div class="b" style="left:1252.50px;top:972.16px;width:47.50px;height:46.00px;background:#e4e4e4;"></div><svg width="23" height="25" viewBox="0 0 23 25" style="position:absolute;left:1264.70px;top:982.66px"><g fill="none" stroke="#666"><rect x="0.9" y="4.6" width="21.2" height="19.9" rx="1.5" stroke-width="1.8"/><path d="M1 13.2H22M1 18.4H22M5.9 8.4V23.8M11.5 8.4V23.8M17.1 8.4V23.8" stroke-width="1.3"/></g><rect x="0" y="3.8" width="23" height="4.6" rx="1" fill="#666"/><rect x="3.6" y="0.2" width="4.2" height="7.4" rx="2.1" fill="#666"/><rect x="14.2" y="0.2" width="4.2" height="7.4" rx="2.1" fill="#666"/><rect x="5.1" y="1.6" width="1.2" height="4.8" fill="#fff" opacity=".85"/><rect x="15.7" y="1.6" width="1.2" height="4.8" fill="#fff" opacity=".85"/></svg>
<div class="b" style="left:1323.20px;top:983.66px;width:22.60px;height:23.00px;border:1.5px solid #dcdcdc;background:#fff;"></div>
<svg width="22" height="22" viewBox="0 0 22 22" style="position:absolute;left:1323px;top:983.36px"><path d="M5.2 11.3L9.3 15.6L17 7.6" fill="none" stroke="#333" stroke-width="2.9" stroke-linecap="round" stroke-linejoin="round"/></svg>
<div class="b" style="left:1354.00px;top:972.16px;width:246.00px;height:46.00px;border:1px solid #e0e0e0;box-shadow:inset 0 1px 1px rgba(0,0,0,.06);background:#fff;"></div><div class="b" style="left:1552.50px;top:972.16px;width:47.50px;height:46.00px;background:#e4e4e4;"></div><svg width="23" height="25" viewBox="0 0 23 25" style="position:absolute;left:1564.70px;top:982.66px"><g fill="none" stroke="#666"><rect x="0.9" y="4.6" width="21.2" height="19.9" rx="1.5" stroke-width="1.8"/><path d="M1 13.2H22M1 18.4H22M5.9 8.4V23.8M11.5 8.4V23.8M17.1 8.4V23.8" stroke-width="1.3"/></g><rect x="0" y="3.8" width="23" height="4.6" rx="1" fill="#666"/><rect x="3.6" y="0.2" width="4.2" height="7.4" rx="2.1" fill="#666"/><rect x="14.2" y="0.2" width="4.2" height="7.4" rx="2.1" fill="#666"/><rect x="5.1" y="1.6" width="1.2" height="4.8" fill="#fff" opacity=".85"/><rect x="15.7" y="1.6" width="1.2" height="4.8" fill="#fff" opacity=".85"/></svg><div class="t" style="left:1366.30px;top:986.71px;font-size:19.2px;line-height:19.2px;color:#333;font-weight:400;letter-spacing:-0.3px;">04-27-2022 16:15</div>
<div class="b" style="left:1623.50px;top:972.16px;width:246.50px;height:46.00px;border:1px solid #e0e0e0;box-shadow:inset 0 1px 1px rgba(0,0,0,.06);background:#fff;"></div><div class="b" style="left:1821.50px;top:972.16px;width:48.50px;height:46.00px;background:#e4e4e4;"></div><svg width="23" height="25" viewBox="0 0 23 25" style="position:absolute;left:1833.70px;top:982.66px"><g fill="none" stroke="#666"><rect x="0.9" y="4.6" width="21.2" height="19.9" rx="1.5" stroke-width="1.8"/><path d="M1 13.2H22M1 18.4H22M5.9 8.4V23.8M11.5 8.4V23.8M17.1 8.4V23.8" stroke-width="1.3"/></g><rect x="0" y="3.8" width="23" height="4.6" rx="1" fill="#666"/><rect x="3.6" y="0.2" width="4.2" height="7.4" rx="2.1" fill="#666"/><rect x="14.2" y="0.2" width="4.2" height="7.4" rx="2.1" fill="#666"/><rect x="5.1" y="1.6" width="1.2" height="4.8" fill="#fff" opacity=".85"/><rect x="15.7" y="1.6" width="1.2" height="4.8" fill="#fff" opacity=".85"/></svg>

<div class="t" style="left:85.00px;top:1061.82px;font-size:18.5px;line-height:18.5px;color:#444;font-weight:400;letter-spacing:0.48px;">Container Out-Gate</div>
<div class="t" style="left:316.00px;top:1061.82px;font-size:18.5px;line-height:18.5px;color:#444;font-weight:400;letter-spacing:0.39px;">4/7</div>
<div class="t" style="left:368.80px;top:1058.91px;font-size:21.7px;line-height:21.7px;color:#4e8cc6;font-weight:400;letter-spacing:-0.3px;-webkit-text-stroke:0.25px #4e8cc6;">EISU9297483</div>
<div class="b" style="left:577.20px;top:1045.98px;width:245.80px;height:46.00px;border:1px solid #e0e0e0;box-shadow:inset 0 1px 1px rgba(0,0,0,.06);background:#fff;"></div><div class="b" style="left:775.80px;top:1045.98px;width:47.20px;height:46.00px;background:#e4e4e4;"></div><svg width="23" height="25" viewBox="0 0 23 25" style="position:absolute;left:788.00px;top:1056.48px"><g fill="none" stroke="#666"><rect x="0.9" y="4.6" width="21.2" height="19.9" rx="1.5" stroke-width="1.8"/><path d="M1 13.2H22M1 18.4H22M5.9 8.4V23.8M11.5 8.4V23.8M17.1 8.4V23.8" stroke-width="1.3"/></g><rect x="0" y="3.8" width="23" height="4.6" rx="1" fill="#666"/><rect x="3.6" y="0.2" width="4.2" height="7.4" rx="2.1" fill="#666"/><rect x="14.2" y="0.2" width="4.2" height="7.4" rx="2.1" fill="#666"/><rect x="5.1" y="1.6" width="1.2" height="4.8" fill="#fff" opacity=".85"/><rect x="15.7" y="1.6" width="1.2" height="4.8" fill="#fff" opacity=".85"/></svg><div class="t" style="left:589.50px;top:1060.53px;font-size:19.2px;line-height:19.2px;color:#333;font-weight:400;letter-spacing:-0.3px;">04-20-2022 00:00</div>
<div class="b" style="left:845.80px;top:1045.98px;width:186.00px;height:46.00px;border:1px solid #e0e0e0;box-shadow:inset 0 1px 1px rgba(0,0,0,.06);background:#fff;"></div><div class="b" style="left:985.80px;top:1045.98px;width:46.00px;height:46.00px;background:#e4e4e4;"></div><svg width="23" height="25" viewBox="0 0 23 25" style="position:absolute;left:998.00px;top:1056.48px"><g fill="none" stroke="#666"><rect x="0.9" y="4.6" width="21.2" height="19.9" rx="1.5" stroke-width="1.8"/><path d="M1 13.2H22M1 18.4H22M5.9 8.4V23.8M11.5 8.4V23.8M17.1 8.4V23.8" stroke-width="1.3"/></g><rect x="0" y="3.8" width="23" height="4.6" rx="1" fill="#666"/><rect x="3.6" y="0.2" width="4.2" height="7.4" rx="2.1" fill="#666"/><rect x="14.2" y="0.2" width="4.2" height="7.4" rx="2.1" fill="#666"/><rect x="5.1" y="1.6" width="1.2" height="4.8" fill="#fff" opacity=".85"/><rect x="15.7" y="1.6" width="1.2" height="4.8" fill="#fff" opacity=".85"/></svg><div class="t" style="left:858.10px;top:1060.53px;font-size:19.2px;line-height:19.2px;color:#333;font-weight:400;letter-spacing:-0.3px;">04-27-2022</div>
<div class="b" style="left:1054.00px;top:1045.98px;width:246.00px;height:46.00px;border:1px solid #e0e0e0;box-shadow:inset 0 1px 1px rgba(0,0,0,.06);background:#fff;"></div><div class="b" style="left:1252.50px;top:1045.98px;width:47.50px;height:46.00px;background:#e4e4e4;"></div><svg width="23" height="25" viewBox="0 0 23 25" style="position:absolute;left:1264.70px;top:1056.48px"><g fill="none" stroke="#666"><rect x="0.9" y="4.6" width="21.2" height="19.9" rx="1.5" stroke-width="1.8"/><path d="M1 13.2H22M1 18.4H22M5.9 8.4V23.8M11.5 8.4V23.8M17.1 8.4V23.8" stroke-width="1.3"/></g><rect x="0" y="3.8" width="23" height="4.6" rx="1" fill="#666"/><rect x="3.6" y="0.2" width="4.2" height="7.4" rx="2.1" fill="#666"/><rect x="14.2" y="0.2" width="4.2" height="7.4" rx="2.1" fill="#666"/><rect x="5.1" y="1.6" width="1.2" height="4.8" fill="#fff" opacity=".85"/><rect x="15.7" y="1.6" width="1.2" height="4.8" fill="#fff" opacity=".85"/></svg>
<div class="b" style="left:1323.20px;top:1057.48px;width:22.60px;height:23.00px;border:1.5px solid #dcdcdc;background:#fff;"></div>
<svg width="22" height="22" viewBox="0 0 22 22" style="position:absolute;left:1323px;top:1057.18px"><path d="M5.2 11.3L9.3 15.6L17 7.6" fill="none" stroke="#333" stroke-width="2.9" stroke-linecap="round" stroke-linejoin="round"/></svg>
<div class="b" style="left:1354.00px;top:1045.98px;width:246.00px;height:46.00px;border:1px solid #e0e0e0;box-shadow:inset 0 1px 1px rgba(0,0,0,.06);background:#fff;"></div><div class="b" style="left:1552.50px;top:1045.98px;width:47.50px;height:46.00px;background:#e4e4e4;"></div><svg width="23" height="25" viewBox="0 0 23 25" style="position:absolute;left:1564.70px;top:1056.48px"><g fill="none" stroke="#666"><rect x="0.9" y="4.6" width="21.2" height="19.9" rx="1.5" stroke-width="1.8"/><path d="M1 13.2H22M1 18.4H22M5.9 8.4V23.8M11.5 8.4V23.8M17.1 8.4V23.8" stroke-width="1.3"/></g><rect x="0" y="3.8" width="23" height="4.6" rx="1" fill="#666"/><rect x="3.6" y="0.2" width="4.2" height="7.4" rx="2.1" fill="#666"/><rect x="14.2" y="0.2" width="4.2" height="7.4" rx="2.1" fill="#666"/><rect x="5.1" y="1.6" width="1.2" height="4.8" fill="#fff" opacity=".85"/><rect x="15.7" y="1.6" width="1.2" height="4.8" fill="#fff" opacity=".85"/></svg><div class="t" style="left:1366.30px;top:1060.53px;font-size:19.2px;line-height:19.2px;color:#333;font-weight:400;letter-spacing:-0.3px;">04-27-2022 16:15</div>
<div class="b" style="left:1623.50px;top:1045.98px;width:246.50px;height:46.00px;border:1px solid #e0e0e0;box-shadow:inset 0 1px 1px rgba(0,0,0,.06);background:#fff;"></div><div class="b" style="left:1821.50px;top:1045.98px;width:48.50px;height:46.00px;background:#e4e4e4;"></div><svg width="23" height="25" viewBox="0 0 23 25" style="position:absolute;left:1833.70px;top:1056.48px"><g fill="none" stroke="#666"><rect x="0.9" y="4.6" width="21.2" height="19.9" rx="1.5" stroke-width="1.8"/><path d="M1 13.2H22M1 18.4H22M5.9 8.4V23.8M11.5 8.4V23.8M17.1 8.4V23.8" stroke-width="1.3"/></g><rect x="0" y="3.8" width="23" height="4.6" rx="1" fill="#666"/><rect x="3.6" y="0.2" width="4.2" height="7.4" rx="2.1" fill="#666"/><rect x="14.2" y="0.2" width="4.2" height="7.4" rx="2.1" fill="#666"/><rect x="5.1" y="1.6" width="1.2" height="4.8" fill="#fff" opacity=".85"/><rect x="15.7" y="1.6" width="1.2" height="4.8" fill="#fff" opacity=".85"/></svg>

<div class="b" style="left:61.50px;top:1106.00px;width:1938.50px;height:73.80px;background:#f5f5f5;"></div>
<div class="t" style="left:85.00px;top:1133.64px;font-size:18.5px;line-height:18.5px;color:#444;font-weight:400;letter-spacing:0.48px;">Empty returned</div>
<div class="t" style="left:316.00px;top:1133.64px;font-size:18.5px;line-height:18.5px;color:#444;font-weight:400;letter-spacing:0.39px;">6/7</div>
<div class="t" style="left:368.80px;top:1132.73px;font-size:21.7px;line-height:21.7px;color:#4e8cc6;font-weight:400;letter-spacing:-0.3px;-webkit-text-stroke:0.25px #4e8cc6;">EISU1998564</div>
<div class="b" style="left:577.20px;top:1119.80px;width:245.80px;height:46.00px;border:1px solid #e0e0e0;box-shadow:inset 0 1px 1px rgba(0,0,0,.06);background:#fff;"></div><div class="b" style="left:775.80px;top:1119.80px;width:47.20px;height:46.00px;background:#e4e4e4;"></div><svg width="23" height="25" viewBox="0 0 23 25" style="position:absolute;left:788.00px;top:1130.30px"><g fill="none" stroke="#666"><rect x="0.9" y="4.6" width="21.2" height="19.9" rx="1.5" stroke-width="1.8"/><path d="M1 13.2H22M1 18.4H22M5.9 8.4V23.8M11.5 8.4V23.8M17.1 8.4V23.8" stroke-width="1.3"/></g><rect x="0" y="3.8" width="23" height="4.6" rx="1" fill="#666"/><rect x="3.6" y="0.2" width="4.2" height="7.4" rx="2.1" fill="#666"/><rect x="14.2" y="0.2" width="4.2" height="7.4" rx="2.1" fill="#666"/><rect x="5.1" y="1.6" width="1.2" height="4.8" fill="#fff" opacity=".85"/><rect x="15.7" y="1.6" width="1.2" height="4.8" fill="#fff" opacity=".85"/></svg><div class="t" style="left:589.50px;top:1134.35px;font-size:19.2px;line-height:19.2px;color:#333;font-weight:400;letter-spacing:-0.3px;">04-18-2022 00:00</div>
<div class="b" style="left:845.80px;top:1119.80px;width:186.00px;height:46.00px;border:1px solid #e0e0e0;box-shadow:inset 0 1px 1px rgba(0,0,0,.06);background:#fff;"></div><div class="b" style="left:985.80px;top:1119.80px;width:46.00px;height:46.00px;background:#e4e4e4;"></div><svg width="23" height="25" viewBox="0 0 23 25" style="position:absolute;left:998.00px;top:1130.30px"><g fill="none" stroke="#666"><rect x="0.9" y="4.6" width="21.2" height="19.9" rx="1.5" stroke-width="1.8"/><path d="M1 13.2H22M1 18.4H22M5.9 8.4V23.8M11.5 8.4V23.8M17.1 8.4V23.8" stroke-width="1.3"/></g><rect x="0" y="3.8" width="23" height="4.6" rx="1" fill="#666"/><rect x="3.6" y="0.2" width="4.2" height="7.4" rx="2.1" fill="#666"/><rect x="14.2" y="0.2" width="4.2" height="7.4" rx="2.1" fill="#666"/><rect x="5.1" y="1.6" width="1.2" height="4.8" fill="#fff" opacity=".85"/><rect x="15.7" y="1.6" width="1.2" height="4.8" fill="#fff" opacity=".85"/></svg><div class="t" style="left:858.10px;top:1134.35px;font-size:19.2px;line-height:19.2px;color:#333;font-weight:400;letter-spacing:-0.3px;">04-25-2022</div>
<div class="b" style="left:1054.00px;top:1119.80px;width:246.00px;height:46.00px;border:1px solid #e0e0e0;box-shadow:inset 0 1px 1px rgba(0,0,0,.06);background:#fff;"></div><div class="b" style="left:1252.50px;top:1119.80px;width:47.50px;height:46.00px;background:#e4e4e4;"></div><svg width="23" height="25" viewBox="0 0 23 25" style="position:absolute;left:1264.70px;top:1130.30px"><g fill="none" stroke="#666"><rect x="0.9" y="4.6" width="21.2" height="19.9" rx="1.5" stroke-width="1.8"/><path d="M1 13.2H22M1 18.4H22M5.9 8.4V23.8M11.5 8.4V23.8M17.1 8.4V23.8" stroke-width="1.3"/></g><rect x="0" y="3.8" width="23" height="4.6" rx="1" fill="#666"/><rect x="3.6" y="0.2" width="4.2" height="7.4" rx="2.1" fill="#666"/><rect x="14.2" y="0.2" width="4.2" height="7.4" rx="2.1" fill="#666"/><rect x="5.1" y="1.6" width="1.2" height="4.8" fill="#fff" opacity=".85"/><rect x="15.7" y="1.6" width="1.2" height="4.8" fill="#fff" opacity=".85"/></svg><div class="t" style="left:1066.30px;top:1134.35px;font-size:19.2px;line-height:19.2px;color:#333;font-weight:400;letter-spacing:-0.3px;">04-24-2022 12:00</div>
<div class="b" style="left:1323.20px;top:1131.30px;width:22.60px;height:23.00px;border:1.5px solid #dcdcdc;background:#fff;"></div>
<svg width="22" height="22" viewBox="0 0 22 22" style="position:absolute;left:1323px;top:1131.00px"><path d="M5.2 11.3L9.3 15.6L17 7.6" fill="none" stroke="#333" stroke-width="2.9" stroke-linecap="round" stroke-linejoin="round"/></svg>
<div class="b" style="left:1354.00px;top:1119.80px;width:246.00px;height:46.00px;border:1px solid #e0e0e0;box-shadow:inset 0 1px 1px rgba(0,0,0,.06);background:#fff;"></div><div class="b" style="left:1552.50px;top:1119.80px;width:47.50px;height:46.00px;background:#e4e4e4;"></div><svg width="23" height="25" viewBox="0 0 23 25" style="position:absolute;left:1564.70px;top:1130.30px"><g fill="none" stroke="#666"><rect x="0.9" y="4.6" width="21.2" height="19.9" rx="1.5" stroke-width="1.8"/><path d="M1 13.2H22M1 18.4H22M5.9 8.4V23.8M11.5 8.4V23.8M17.1 8.4V23.8" stroke-width="1.3"/></g><rect x="0" y="3.8" width="23" height="4.6" rx="1" fill="#666"/><rect x="3.6" y="0.2" width="4.2" height="7.4" rx="2.1" fill="#666"/><rect x="14.2" y="0.2" width="4.2" height="7.4" rx="2.1" fill="#666"/><rect x="5.1" y="1.6" width="1.2" height="4.8" fill="#fff" opacity=".85"/><rect x="15.7" y="1.6" width="1.2" height="4.8" fill="#fff" opacity=".85"/></svg><div class="t" style="left:1366.30px;top:1134.35px;font-size:19.2px;line-height:19.2px;color:#333;font-weight:400;letter-spacing:-0.3px;">04-24-2022 12:34</div>
<div class="b" style="left:1623.50px;top:1119.80px;width:246.50px;height:46.00px;border:1px solid #e0e0e0;box-shadow:inset 0 1px 1px rgba(0,0,0,.06);background:#fff;"></div><div class="b" style="left:1821.50px;top:1119.80px;width:48.50px;height:46.00px;background:#e4e4e4;"></div><svg width="23" height="25" viewBox="0 0 23 25" style="position:absolute;left:1833.70px;top:1130.30px"><g fill="none" stroke="#666"><rect x="0.9" y="4.6" width="21.2" height="19.9" rx="1.5" stroke-width="1.8"/><path d="M1 13.2H22M1 18.4H22M5.9 8.4V23.8M11.5 8.4V23.8M17.1 8.4V23.8" stroke-width="1.3"/></g><rect x="0" y="3.8" width="23" height="4.6" rx="1" fill="#666"/><rect x="3.6" y="0.2" width="4.2" height="7.4" rx="2.1" fill="#666"/><rect x="14.2" y="0.2" width="4.2" height="7.4" rx="2.1" fill="#666"/><rect x="5.1" y="1.6" width="1.2" height="4.8" fill="#fff" opacity=".85"/><rect x="15.7" y="1.6" width="1.2" height="4.8" fill="#fff" opacity=".85"/></svg>

<div class="b" style="left:1540px;top:285px;width:460px;height:853px;background:linear-gradient(to right, rgba(255,255,255,0) 0px, rgba(255,255,255,0.12) 70px, rgba(255,255,255,0.40) 165px, rgba(255,255,255,0.68) 305px, rgba(255,255,255,0.83) 365px, rgba(255,255,255,0.91) 400px, rgba(255,255,255,0.98) 435px, rgba(255,255,255,1) 455px);"></div>
</body></html>
